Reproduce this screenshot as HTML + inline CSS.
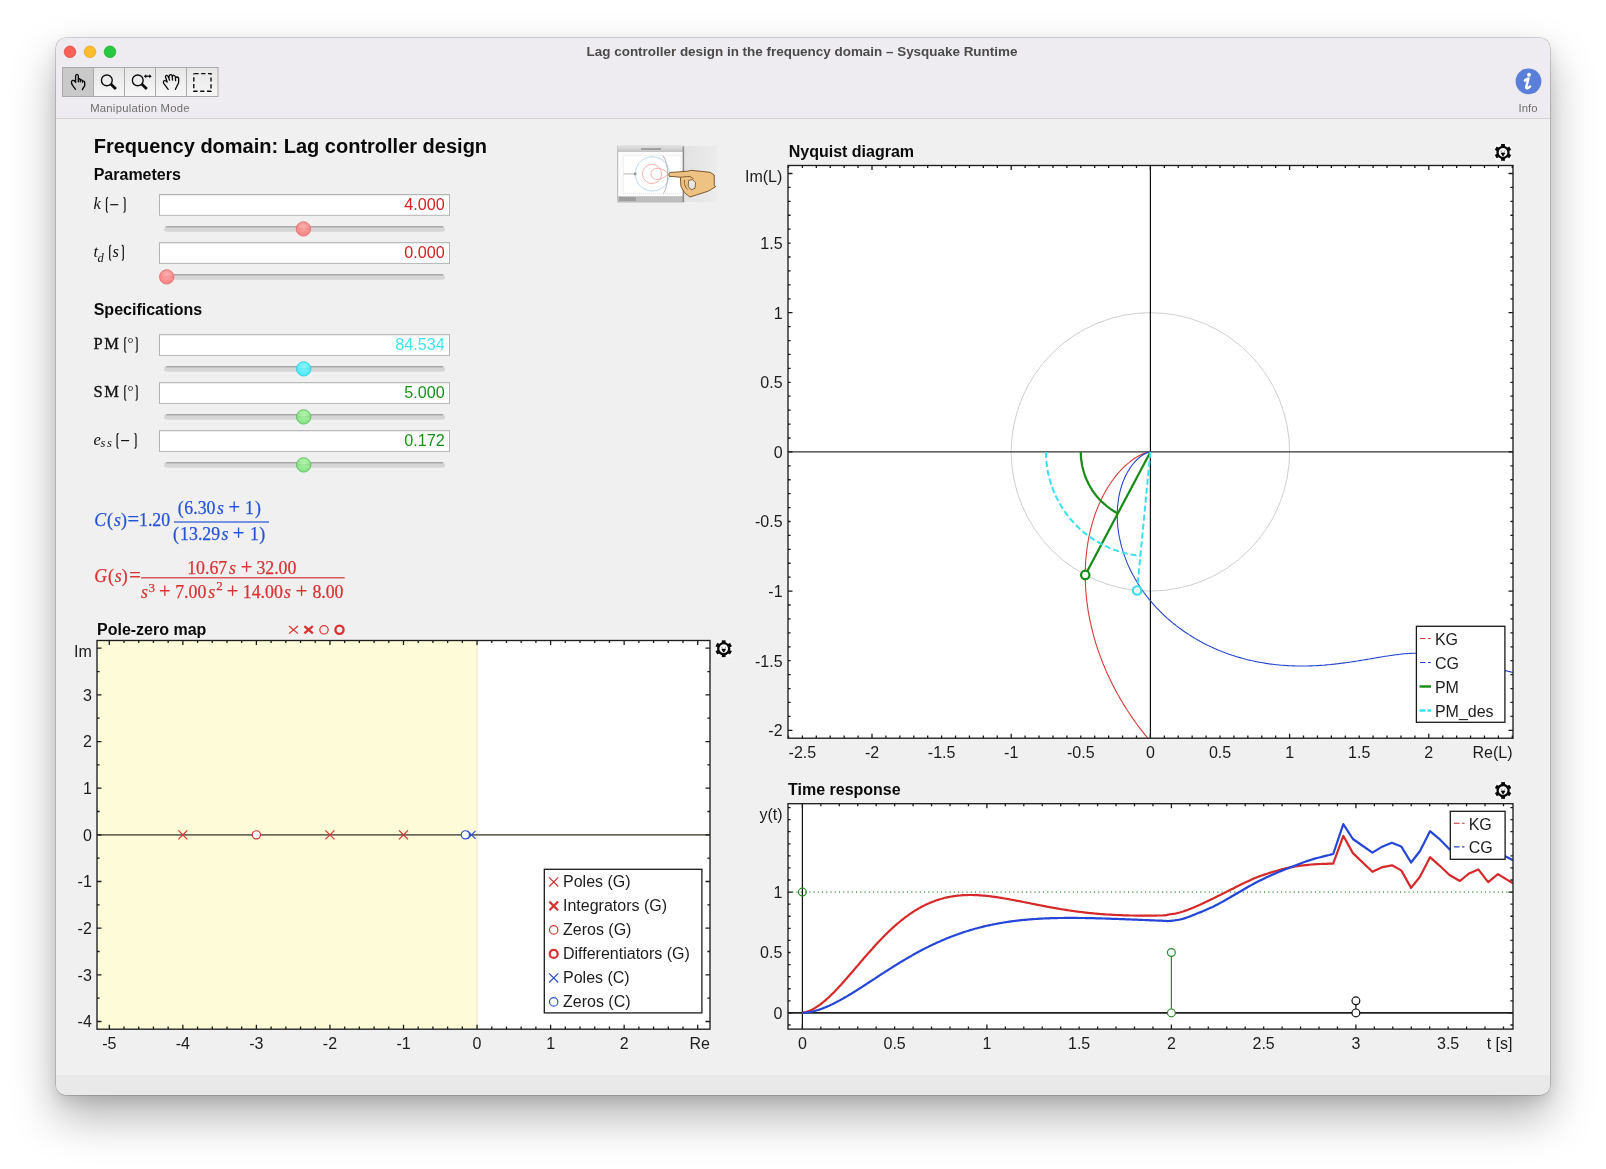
<!DOCTYPE html>
<html><head><meta charset="utf-8"><style>
html,body{margin:0;padding:0;width:1606px;height:1169px;overflow:hidden;background:#ffffff;}
#win{position:absolute;left:56px;top:37.5px;width:1494px;height:1057px;border-radius:10px;background:#f0f0f0;
box-shadow:0 0 0 0.5px rgba(0,0,0,0.3),0 6px 14px rgba(0,0,0,0.10),0 22px 46px rgba(0,0,0,0.30);overflow:hidden}
#tb{position:absolute;left:0;top:0;right:0;height:80px;background:#eeecf0;border-bottom:1px solid #d3d3d5}
#bs{position:absolute;left:0;bottom:0;right:0;height:20px;background:#e9e9e9}
svg{position:absolute;left:0;top:0;will-change:transform}
text{font-family:'Liberation Sans',sans-serif}
</style></head><body>
<div id="win"><div id="tb"></div><div id="bs"></div></div>
<svg width="1606" height="1169" viewBox="0 0 1606 1169">
<text x="802" y="56" font-size="13.45" font-weight="bold" text-anchor="middle" fill="#4a4a4a">Lag controller design in the frequency domain – Sysquake Runtime</text>
<circle cx="70" cy="51.8" r="5.8" fill="#fe5f57" stroke="#e2463f" stroke-width="0.7"/>
<circle cx="90" cy="51.8" r="5.8" fill="#febc2e" stroke="#e1a116" stroke-width="0.7"/>
<circle cx="110" cy="51.8" r="5.8" fill="#28c840" stroke="#14ae2a" stroke-width="0.7"/>
<defs><linearGradient id="btn" x1="0" y1="0" x2="0" y2="1"><stop offset="0" stop-color="#e6e6e6"/><stop offset="1" stop-color="#f7f7f7"/></linearGradient></defs>
<rect x="62.5" y="67.5" width="31.0" height="29" fill="#c9c9c9"/>
<rect x="93.5" y="67.5" width="31.0" height="29" fill="url(#btn)"/>
<rect x="124.5" y="67.5" width="31.0" height="29" fill="url(#btn)"/>
<rect x="155.5" y="67.5" width="31.0" height="29" fill="url(#btn)"/>
<rect x="186.5" y="67.5" width="31.5" height="29" fill="url(#btn)"/>
<rect x="62.5" y="67.5" width="155.5" height="29" fill="none" stroke="#a9a9a9" stroke-width="1"/>
<line x1="93.5" y1="67.5" x2="93.5" y2="96.5" stroke="#a9a9a9" stroke-width="1"/>
<line x1="124.5" y1="67.5" x2="124.5" y2="96.5" stroke="#a9a9a9" stroke-width="1"/>
<line x1="155.5" y1="67.5" x2="155.5" y2="96.5" stroke="#a9a9a9" stroke-width="1"/>
<line x1="186.5" y1="67.5" x2="186.5" y2="96.5" stroke="#a9a9a9" stroke-width="1"/>
<path d="M75.55 89.3 L72.76 85.7 C71.8 84.3 71.2 83 71.5 81.6 C72 80.3 73.3 80.1 74.2 80.6 L75.6 82.2 V76.2 C75.6 74.9 76.2 74.3 77 74.3 C77.8 74.3 78.35 74.9 78.35 76.2 V81.7 V79.4 C78.35 78.5 80.3 78.5 80.3 79.8 V81.7 V80.6 C80.4 79.6 82.4 79.6 82.5 81 V82.3 V81.6 C82.8 80.8 84.7 81 84.7 82.6 V85.7 L82.3 89.7" fill="none" stroke="#0a0a0a" stroke-width="1.35" stroke-linecap="round" stroke-linejoin="round"/>
<circle cx="106.84" cy="80.35" r="5.4" fill="none" stroke="#0a0a0a" stroke-width="1.35"/><path d="M110.8 84.1 L115.9 89" stroke="#0a0a0a" stroke-width="2.8"/>
<circle cx="137.75" cy="80.35" r="5.4" fill="none" stroke="#0a0a0a" stroke-width="1.35"/><path d="M141.7 84.1 L146.8 89" stroke="#0a0a0a" stroke-width="2.8"/><path d="M145.5 76.2 H150" stroke="#0a0a0a" stroke-width="1.3"/><path d="M143.8 76.2 L146.2 74.2 V78.2Z M151.7 76.2 L149.3 74.2 V78.2Z" fill="#0a0a0a"/>
<path d="M168.2 89.3 L163.9 83.7 C163.2 82.6 163.2 81.2 164.3 80.7 C165.2 80.3 166.2 80.9 167.2 82 L165.6 77.2 C165.2 76 166 75.2 166.8 75.3 C167.6 75.4 168.1 76 168.4 77 L169.6 80.2 M169.2 77.2 C169 75.6 169.7 74.7 170.7 74.7 C171.7 74.7 172.2 75.5 172.3 76.6 L172.5 80 M172.3 76.6 C172.5 75.6 173.2 75.2 173.9 75.3 C174.8 75.4 175.3 76.2 175.4 77.2 L175.6 80.6 M175.4 78 C175.7 77.2 176.4 76.9 177.1 77 C178.2 77.2 178.8 78.2 178.7 79.6 L178.5 83 L175.4 89.3" fill="none" stroke="#0a0a0a" stroke-width="1.3" stroke-linecap="round" stroke-linejoin="round"/>
<rect x="193.8" y="73.6" width="17.2" height="17.6" fill="none" stroke="#0a0a0a" stroke-width="1.35" stroke-dasharray="4.2 2.6" stroke-dashoffset="-0.6"/>
<text x="140" y="111.6" font-size="11.3" text-anchor="middle" fill="#6f6f6f" letter-spacing="0.25">Manipulation Mode</text>
<circle cx="1528.5" cy="81.3" r="12.9" fill="#5a7fd8"/>
<path d="M1524.9 80.6 Q1527 78.3 1528.5 78.4 L1526.3 86.5 Q1525.9 88.5 1527.3 88.3 Q1528.7 88 1530 86.5" fill="none" stroke="#fff" stroke-width="2.5" stroke-linecap="round" stroke-linejoin="round"/><circle cx="1529" cy="74.7" r="1.95" fill="#fff"/>
<text x="1528" y="111.8" font-size="11.3" text-anchor="middle" fill="#6f6f6f">Info</text>
<text x="93.7" y="152.8" font-size="20" text-anchor="start" font-weight="bold" fill="#0a0a0a" >Frequency domain: Lag controller design</text>
<text x="93.7" y="179.8" font-size="16" text-anchor="start" font-weight="bold" fill="#0a0a0a" >Parameters</text>
<text x="93.7" y="315.3" font-size="16" text-anchor="start" font-weight="bold" fill="#0a0a0a" >Specifications</text>
<defs><radialGradient id="thf77b7b" cx="0.5" cy="0.35" r="0.7"><stop offset="0" stop-color="#fbb0b0"/><stop offset="1" stop-color="#f77b7b"/></radialGradient></defs>
<defs><radialGradient id="th3de8f6" cx="0.5" cy="0.35" r="0.7"><stop offset="0" stop-color="#8ff5fc"/><stop offset="1" stop-color="#3de8f6"/></radialGradient></defs>
<defs><radialGradient id="th7ee07e" cx="0.5" cy="0.35" r="0.7"><stop offset="0" stop-color="#b8f2b0"/><stop offset="1" stop-color="#7ee07e"/></radialGradient></defs>
<text x="93.4" y="209" font-size="16.5" style="font-family:'Liberation Serif',serif" fill="#111" font-style="italic">k</text>
<path d="M108 197.4 Q106.5 197.7 106.5 199.4 V210.5 Q106.5 212.2 108 212.5 M123.5 197.4 Q125 197.7 125 199.4 V210.5 Q125 212.2 123.5 212.5" fill="none" stroke="#1a1a1a" stroke-width="1.25"/>
<line x1="110.2" y1="204.7" x2="118.3" y2="204.7" stroke="#111" stroke-width="1.2"/>
<text x="93.6" y="256.8" font-size="16.5" style="font-family:'Liberation Serif',serif" fill="#111" font-style="italic">t</text>
<text x="97.6" y="261.9" font-size="12.5" style="font-family:'Liberation Serif',serif" fill="#111" font-style="italic">d</text>
<path d="M111.2 245.2 Q109.7 245.5 109.7 247.2 V258.5 Q109.7 260.2 111.2 260.5 M121.8 245.2 Q123.3 245.5 123.3 247.2 V258.5 Q123.3 260.2 121.8 260.5" fill="none" stroke="#1a1a1a" stroke-width="1.25"/>
<text x="112.6" y="257.2" font-size="16.5" style="font-family:'Liberation Serif',serif" fill="#111" font-style="italic">s</text>
<text x="93.6" y="348.7" font-size="16.5" style="font-family:'Liberation Serif',serif" fill="#111" stroke="#111" stroke-width="0.35" letter-spacing="1.4">PM</text>
<path d="M126.3 337.3 Q124.8 337.6 124.8 339.3 V350.4 Q124.8 352.1 126.3 352.4 M135.6 337.3 Q137.1 337.6 137.1 339.3 V350.4 Q137.1 352.1 135.6 352.4" fill="none" stroke="#1a1a1a" stroke-width="1.25"/>
<text x="130.5" y="348" font-size="15" style="font-family:'Liberation Serif',serif" fill="#111" text-anchor="middle">°</text>
<text x="93.6" y="396.7" font-size="16.5" style="font-family:'Liberation Serif',serif" fill="#111" stroke="#111" stroke-width="0.35" letter-spacing="1.4">SM</text>
<path d="M126.3 385.3 Q124.8 385.6 124.8 387.3 V398.4 Q124.8 400.1 126.3 400.4 M135.6 385.3 Q137.1 385.6 137.1 387.3 V398.4 Q137.1 400.1 135.6 400.4" fill="none" stroke="#1a1a1a" stroke-width="1.25"/>
<text x="130.5" y="396" font-size="15" style="font-family:'Liberation Serif',serif" fill="#111" text-anchor="middle">°</text>
<text x="93.6" y="444.9" font-size="16.5" style="font-family:'Liberation Serif',serif" fill="#111" font-style="italic">e</text>
<text x="100.6" y="446.9" font-size="12.5" style="font-family:'Liberation Serif',serif" fill="#111" font-style="italic" letter-spacing="1.6">ss</text>
<path d="M118.6 433.3 Q117.1 433.6 117.1 435.3 V446.4 Q117.1 448.1 118.6 448.4 M134.5 433.3 Q136 433.6 136 435.3 V446.4 Q136 448.1 134.5 448.4" fill="none" stroke="#1a1a1a" stroke-width="1.25"/>
<line x1="121.1" y1="440.6" x2="129.1" y2="440.6" stroke="#111" stroke-width="1.2"/>
<rect x="159.5" y="194.5" width="290" height="20.8" fill="#fff" stroke="#b4b4b4" stroke-width="1"/>
<line x1="160" y1="195.5" x2="449" y2="195.5" stroke="#ececec" stroke-width="1"/>
<text x="444.8" y="210.1" font-size="16.2" text-anchor="end" fill="#d51f1f">4.000</text>
<rect x="164" y="226.3" width="281" height="5.4" rx="2.7" fill="#d6d6d6"/>
<path d="M166.5 226.8 H442.5" stroke="#a9a9a9" stroke-width="1.4" stroke-linecap="round"/>
<circle cx="303.4" cy="228.9" r="7.2" fill="url(#thf77b7b)" stroke="#e26a6a" stroke-width="0.8"/>
<line x1="296.9" y1="228.9" x2="309.9" y2="228.9" stroke="#e26a6a" stroke-opacity="0.35" stroke-width="0.8"/>
<rect x="159.5" y="242.6" width="290" height="20.8" fill="#fff" stroke="#b4b4b4" stroke-width="1"/>
<line x1="160" y1="243.6" x2="449" y2="243.6" stroke="#ececec" stroke-width="1"/>
<text x="444.8" y="258.2" font-size="16.2" text-anchor="end" fill="#d51f1f">0.000</text>
<rect x="164" y="274.29999999999995" width="281" height="5.4" rx="2.7" fill="#d6d6d6"/>
<path d="M166.5 274.79999999999995 H442.5" stroke="#a9a9a9" stroke-width="1.4" stroke-linecap="round"/>
<circle cx="166.7" cy="276.9" r="7.2" fill="url(#thf77b7b)" stroke="#e26a6a" stroke-width="0.8"/>
<line x1="160.2" y1="276.9" x2="173.2" y2="276.9" stroke="#e26a6a" stroke-opacity="0.35" stroke-width="0.8"/>
<rect x="159.5" y="334.6" width="290" height="20.8" fill="#fff" stroke="#b4b4b4" stroke-width="1"/>
<line x1="160" y1="335.6" x2="449" y2="335.6" stroke="#ececec" stroke-width="1"/>
<text x="444.8" y="350.20000000000005" font-size="16.2" text-anchor="end" fill="#3ee4f2">84.534</text>
<rect x="164" y="366.29999999999995" width="281" height="5.4" rx="2.7" fill="#d6d6d6"/>
<path d="M166.5 366.79999999999995 H442.5" stroke="#a9a9a9" stroke-width="1.4" stroke-linecap="round"/>
<circle cx="303.7" cy="368.9" r="7.2" fill="url(#th3de8f6)" stroke="#28c6d6" stroke-width="0.8"/>
<line x1="297.2" y1="368.9" x2="310.2" y2="368.9" stroke="#28c6d6" stroke-opacity="0.35" stroke-width="0.8"/>
<rect x="159.5" y="382.6" width="290" height="20.8" fill="#fff" stroke="#b4b4b4" stroke-width="1"/>
<line x1="160" y1="383.6" x2="449" y2="383.6" stroke="#ececec" stroke-width="1"/>
<text x="444.8" y="398.20000000000005" font-size="16.2" text-anchor="end" fill="#199119">5.000</text>
<rect x="164" y="414.29999999999995" width="281" height="5.4" rx="2.7" fill="#d6d6d6"/>
<path d="M166.5 414.79999999999995 H442.5" stroke="#a9a9a9" stroke-width="1.4" stroke-linecap="round"/>
<circle cx="303.7" cy="416.9" r="7.2" fill="url(#th7ee07e)" stroke="#53b653" stroke-width="0.8"/>
<line x1="297.2" y1="416.9" x2="310.2" y2="416.9" stroke="#53b653" stroke-opacity="0.35" stroke-width="0.8"/>
<rect x="159.5" y="430.6" width="290" height="20.8" fill="#fff" stroke="#b4b4b4" stroke-width="1"/>
<line x1="160" y1="431.6" x2="449" y2="431.6" stroke="#ececec" stroke-width="1"/>
<text x="444.8" y="446.20000000000005" font-size="16.2" text-anchor="end" fill="#199119">0.172</text>
<rect x="164" y="462.29999999999995" width="281" height="5.4" rx="2.7" fill="#d6d6d6"/>
<path d="M166.5 462.79999999999995 H442.5" stroke="#a9a9a9" stroke-width="1.4" stroke-linecap="round"/>
<circle cx="303.7" cy="464.9" r="7.2" fill="url(#th7ee07e)" stroke="#53b653" stroke-width="0.8"/>
<line x1="297.2" y1="464.9" x2="310.2" y2="464.9" stroke="#53b653" stroke-opacity="0.35" stroke-width="0.8"/>
<text x="94.3" y="525.8" font-size="17.8" style="font-family:'Liberation Serif',serif" fill="#2553d6" stroke="#2553d6" stroke-width="0.25" font-style="italic">C</text>
<text x="107" y="525.8" font-size="17.8" style="font-family:'Liberation Serif',serif" fill="#2553d6" stroke="#2553d6" stroke-width="0.25">(</text>
<text x="114.1" y="525.8" font-size="17.8" style="font-family:'Liberation Serif',serif" fill="#2553d6" stroke="#2553d6" stroke-width="0.25" font-style="italic">s</text>
<text x="121" y="525.8" font-size="17.8" style="font-family:'Liberation Serif',serif" fill="#2553d6" stroke="#2553d6" stroke-width="0.25">)</text>
<text x="127.4" y="525.8" font-size="20.5" style="font-family:'Liberation Serif',serif" fill="#2553d6" stroke="#2553d6" stroke-width="0.25">=</text>
<text x="139" y="525.8" font-size="17.8" style="font-family:'Liberation Serif',serif" fill="#2553d6" stroke="#2553d6" stroke-width="0.25">1.20</text>
<line x1="174" y1="522" x2="269" y2="522" stroke="#2553d6" stroke-width="1.6" stroke-opacity="0.8"/>
<text x="177.7" y="513.8" font-size="17.8" style="font-family:'Liberation Serif',serif" fill="#2553d6" stroke="#2553d6" stroke-width="0.25">(</text>
<text x="184.3" y="513.8" font-size="17.8" style="font-family:'Liberation Serif',serif" fill="#2553d6" stroke="#2553d6" stroke-width="0.25">6.30</text>
<text x="217" y="513.8" font-size="17.8" style="font-family:'Liberation Serif',serif" fill="#2553d6" stroke="#2553d6" stroke-width="0.25" font-style="italic">s</text>
<text x="228.5" y="513.8" font-size="20.5" style="font-family:'Liberation Serif',serif" fill="#2553d6" stroke="#2553d6" stroke-width="0.25">+</text>
<text x="244.9" y="513.8" font-size="17.8" style="font-family:'Liberation Serif',serif" fill="#2553d6" stroke="#2553d6" stroke-width="0.25">1</text>
<text x="254.9" y="513.8" font-size="17.8" style="font-family:'Liberation Serif',serif" fill="#2553d6" stroke="#2553d6" stroke-width="0.25">)</text>
<text x="173" y="540" font-size="17.8" style="font-family:'Liberation Serif',serif" fill="#2553d6" stroke="#2553d6" stroke-width="0.25">(</text>
<text x="180.1" y="540" font-size="17.8" style="font-family:'Liberation Serif',serif" fill="#2553d6" stroke="#2553d6" stroke-width="0.25">13.29</text>
<text x="221.4" y="540" font-size="17.8" style="font-family:'Liberation Serif',serif" fill="#2553d6" stroke="#2553d6" stroke-width="0.25" font-style="italic">s</text>
<text x="232.8" y="540" font-size="20.5" style="font-family:'Liberation Serif',serif" fill="#2553d6" stroke="#2553d6" stroke-width="0.25">+</text>
<text x="249.9" y="540" font-size="17.8" style="font-family:'Liberation Serif',serif" fill="#2553d6" stroke="#2553d6" stroke-width="0.25">1</text>
<text x="259.3" y="540" font-size="17.8" style="font-family:'Liberation Serif',serif" fill="#2553d6" stroke="#2553d6" stroke-width="0.25">)</text>
<text x="94.3" y="581.7" font-size="17.8" style="font-family:'Liberation Serif',serif" fill="#d93333" stroke="#d93333" stroke-width="0.25" font-style="italic">G</text>
<text x="108" y="581.7" font-size="17.8" style="font-family:'Liberation Serif',serif" fill="#d93333" stroke="#d93333" stroke-width="0.25">(</text>
<text x="114.7" y="581.7" font-size="17.8" style="font-family:'Liberation Serif',serif" fill="#d93333" stroke="#d93333" stroke-width="0.25" font-style="italic">s</text>
<text x="121.8" y="581.7" font-size="17.8" style="font-family:'Liberation Serif',serif" fill="#d93333" stroke="#d93333" stroke-width="0.25">)</text>
<text x="129.2" y="581.7" font-size="20.5" style="font-family:'Liberation Serif',serif" fill="#d93333" stroke="#d93333" stroke-width="0.25">=</text>
<line x1="141" y1="577.7" x2="344.7" y2="577.7" stroke="#d93333" stroke-width="1.6" stroke-opacity="0.8"/>
<text x="187.2" y="574.4" font-size="17.8" style="font-family:'Liberation Serif',serif" fill="#d93333" stroke="#d93333" stroke-width="0.25">10.67</text>
<text x="228.9" y="574.4" font-size="17.8" style="font-family:'Liberation Serif',serif" fill="#d93333" stroke="#d93333" stroke-width="0.25" font-style="italic">s</text>
<text x="240.7" y="574.4" font-size="20.5" style="font-family:'Liberation Serif',serif" fill="#d93333" stroke="#d93333" stroke-width="0.25">+</text>
<text x="256.4" y="574.4" font-size="17.8" style="font-family:'Liberation Serif',serif" fill="#d93333" stroke="#d93333" stroke-width="0.25">32.00</text>
<text x="141" y="597.5" font-size="17.8" style="font-family:'Liberation Serif',serif" fill="#d93333" stroke="#d93333" stroke-width="0.25" font-style="italic">s</text>
<text x="159.1" y="597.5" font-size="20.5" style="font-family:'Liberation Serif',serif" fill="#d93333" stroke="#d93333" stroke-width="0.25">+</text>
<text x="175.2" y="597.5" font-size="17.8" style="font-family:'Liberation Serif',serif" fill="#d93333" stroke="#d93333" stroke-width="0.25">7.00</text>
<text x="208.2" y="597.5" font-size="17.8" style="font-family:'Liberation Serif',serif" fill="#d93333" stroke="#d93333" stroke-width="0.25" font-style="italic">s</text>
<text x="226.7" y="597.5" font-size="20.5" style="font-family:'Liberation Serif',serif" fill="#d93333" stroke="#d93333" stroke-width="0.25">+</text>
<text x="242.8" y="597.5" font-size="17.8" style="font-family:'Liberation Serif',serif" fill="#d93333" stroke="#d93333" stroke-width="0.25">14.00</text>
<text x="284" y="597.5" font-size="17.8" style="font-family:'Liberation Serif',serif" fill="#d93333" stroke="#d93333" stroke-width="0.25" font-style="italic">s</text>
<text x="295.8" y="597.5" font-size="20.5" style="font-family:'Liberation Serif',serif" fill="#d93333" stroke="#d93333" stroke-width="0.25">+</text>
<text x="312.4" y="597.5" font-size="17.8" style="font-family:'Liberation Serif',serif" fill="#d93333" stroke="#d93333" stroke-width="0.25">8.00</text>
<text x="148.5" y="591.8" font-size="13" style="font-family:'Liberation Serif',serif" fill="#d93333" stroke="#d93333" stroke-width="0.25">3</text>
<text x="216.2" y="590.4" font-size="13" style="font-family:'Liberation Serif',serif" fill="#d93333" stroke="#d93333" stroke-width="0.25">2</text>
<defs><linearGradient id="thbg" x1="0" y1="0" x2="1" y2="0"><stop offset="0" stop-color="#e2e2e2"/><stop offset="1" stop-color="#ececec"/></linearGradient><linearGradient id="thtb" x1="0" y1="0" x2="0" y2="1"><stop offset="0" stop-color="#e2e2e2"/><stop offset="1" stop-color="#c2c2c2"/></linearGradient></defs>
<rect x="683" y="146" width="34" height="56" fill="url(#thbg)"/>
<rect x="617.8" y="146.2" width="66" height="55.8" fill="#fbfbfb" stroke="#9a9a9a" stroke-width="0.7"/>
<rect x="617.8" y="146.2" width="66" height="5.8" fill="url(#thtb)"/>
<rect x="641" y="148" width="20" height="2" fill="#555" opacity="0.4"/>
<rect x="617.8" y="196.2" width="66" height="5.8" fill="#bdbdbd"/><rect x="619" y="197" width="17" height="4" fill="#8a8a8a" opacity="0.6"/>
<line x1="683.2" y1="146.5" x2="683.2" y2="202" stroke="#707070" stroke-width="1"/>
<rect x="623.6" y="155.4" width="57.2" height="38" fill="#fff" stroke="#c8c8c8" stroke-width="0.6" stroke-dasharray="0.8 1.2"/>
<line x1="623.6" y1="173.9" x2="635.3" y2="173.9" stroke="#aaa" stroke-width="0.9"/><rect x="634" y="172.6" width="2.4" height="2.6" fill="#888"/>
<circle cx="652.4" cy="173.9" r="17.1" fill="none" stroke="#9cc8ee" stroke-width="0.7"/>
<circle cx="652" cy="173.9" r="9.6" fill="none" stroke="#f09a9a" stroke-width="0.8"/>
<path d="M668.8 173.9 C664 170 661 168.4 657 168.4 C653.6 168.4 651 170.8 651 173.9 C651 177 653.6 179.4 657 179.4 C661 179.4 664 177.8 668.8 173.9Z" fill="none" stroke="#f09a9a" stroke-width="0.8"/>
<path d="M663 155.4 C669 164 669.5 184 663.5 193.4" fill="none" stroke="#9a9a9a" stroke-width="0.7"/>
<path d="M669.3 176.3 L680.4 177.2 L680.9 186.1 L684.3 192.5 L689.9 197 L704.1 192.5 L708.6 191 L715.7 186.6 L714.3 185.8 L714.2 175 L710 172.3 L691 170.3 L688 171.2 L670.1 172.5 C668.6 173.2 668.6 175.6 669.3 176.3Z" fill="#eec283" stroke="#6e4c1c" stroke-width="0.9" stroke-linejoin="round"/>
<path d="M688.6 180.4 L692.4 179.6 L695.6 182.4 L695 188.3 L691.2 189.8 L688.2 186.2Z" fill="#e6e6e6" stroke="#6e4c1c" stroke-width="0.8"/>
<path d="M684.8 179.8 C683.6 183 685 187 687.8 189.6 M680.4 177.2 L689.9 176.4 L693.6 178.8" fill="none" stroke="#6e4c1c" stroke-width="0.8"/>
<text x="97" y="634.7" font-size="16" text-anchor="start" font-weight="bold" fill="#0a0a0a" >Pole-zero map</text>
<rect x="97" y="640.5" width="613" height="388.70000000000005" fill="#fff"/>
<rect x="97" y="640.5" width="380.05" height="388.70000000000005" fill="#fefbd8"/>
<line x1="477.05" y1="640.5" x2="477.05" y2="1029.2" stroke="#e8e6cf" stroke-width="1"/>
<line x1="97" y1="834.85" x2="710" y2="834.85" stroke="#6c6a5c" stroke-width="1.7"/>
<path d="M109.3 640.5v4.5M109.3 1029.2v-4.5M124.01 640.5v2.6M124.01 1029.2v-2.6M138.72 640.5v2.6M138.72 1029.2v-2.6M153.43 640.5v2.6M153.43 1029.2v-2.6M168.14 640.5v2.6M168.14 1029.2v-2.6M182.85 640.5v4.5M182.85 1029.2v-4.5M197.56 640.5v2.6M197.56 1029.2v-2.6M212.27 640.5v2.6M212.27 1029.2v-2.6M226.98 640.5v2.6M226.98 1029.2v-2.6M241.69 640.5v2.6M241.69 1029.2v-2.6M256.4 640.5v4.5M256.4 1029.2v-4.5M271.11 640.5v2.6M271.11 1029.2v-2.6M285.82 640.5v2.6M285.82 1029.2v-2.6M300.53 640.5v2.6M300.53 1029.2v-2.6M315.24 640.5v2.6M315.24 1029.2v-2.6M329.95 640.5v4.5M329.95 1029.2v-4.5M344.66 640.5v2.6M344.66 1029.2v-2.6M359.37 640.5v2.6M359.37 1029.2v-2.6M374.08 640.5v2.6M374.08 1029.2v-2.6M388.79 640.5v2.6M388.79 1029.2v-2.6M403.5 640.5v4.5M403.5 1029.2v-4.5M418.21 640.5v2.6M418.21 1029.2v-2.6M432.92 640.5v2.6M432.92 1029.2v-2.6M447.63 640.5v2.6M447.63 1029.2v-2.6M462.34 640.5v2.6M462.34 1029.2v-2.6M477.05 640.5v4.5M477.05 1029.2v-4.5M491.76 640.5v2.6M491.76 1029.2v-2.6M506.47 640.5v2.6M506.47 1029.2v-2.6M521.18 640.5v2.6M521.18 1029.2v-2.6M535.89 640.5v2.6M535.89 1029.2v-2.6M550.6 640.5v4.5M550.6 1029.2v-4.5M565.31 640.5v2.6M565.31 1029.2v-2.6M580.02 640.5v2.6M580.02 1029.2v-2.6M594.73 640.5v2.6M594.73 1029.2v-2.6M609.44 640.5v2.6M609.44 1029.2v-2.6M624.15 640.5v4.5M624.15 1029.2v-4.5M638.86 640.5v2.6M638.86 1029.2v-2.6M653.57 640.5v2.6M653.57 1029.2v-2.6M668.28 640.5v2.6M668.28 1029.2v-2.6M682.99 640.5v2.6M682.99 1029.2v-2.6M697.7 640.5v4.5M697.7 1029.2v-4.5M97 1021.49h4.5M710 1021.49h-4.5M97 998.16h2.6M710 998.16h-2.6M97 974.83h4.5M710 974.83h-4.5M97 951.5h2.6M710 951.5h-2.6M97 928.17h4.5M710 928.17h-4.5M97 904.84h2.6M710 904.84h-2.6M97 881.51h4.5M710 881.51h-4.5M97 858.18h2.6M710 858.18h-2.6M97 834.85h4.5M710 834.85h-4.5M97 811.52h2.6M710 811.52h-2.6M97 788.19h4.5M710 788.19h-4.5M97 764.86h2.6M710 764.86h-2.6M97 741.53h4.5M710 741.53h-4.5M97 718.2h2.6M710 718.2h-2.6M97 694.87h4.5M710 694.87h-4.5M97 671.54h2.6M710 671.54h-2.6M97 648.21h4.5M710 648.21h-4.5" stroke="#1a1a1a" stroke-width="1.3" fill="none"/>
<rect x="97" y="640.5" width="613" height="388.7" fill="none" stroke="#1e1e1e" stroke-width="1.35"/>
<text x="109.3" y="1048.8" font-size="16" text-anchor="middle" fill="#1c1c1c" >-5</text>
<text x="182.85" y="1048.8" font-size="16" text-anchor="middle" fill="#1c1c1c" >-4</text>
<text x="256.4" y="1048.8" font-size="16" text-anchor="middle" fill="#1c1c1c" >-3</text>
<text x="329.95" y="1048.8" font-size="16" text-anchor="middle" fill="#1c1c1c" >-2</text>
<text x="403.5" y="1048.8" font-size="16" text-anchor="middle" fill="#1c1c1c" >-1</text>
<text x="477.05" y="1048.8" font-size="16" text-anchor="middle" fill="#1c1c1c" >0</text>
<text x="550.6" y="1048.8" font-size="16" text-anchor="middle" fill="#1c1c1c" >1</text>
<text x="624.15" y="1048.8" font-size="16" text-anchor="middle" fill="#1c1c1c" >2</text>
<text x="710" y="1048.8" font-size="16" text-anchor="end" fill="#1c1c1c" >Re</text>
<text x="91.8" y="1027.29" font-size="16" text-anchor="end" fill="#1c1c1c" >-4</text>
<text x="91.8" y="980.63" font-size="16" text-anchor="end" fill="#1c1c1c" >-3</text>
<text x="91.8" y="933.97" font-size="16" text-anchor="end" fill="#1c1c1c" >-2</text>
<text x="91.8" y="887.31" font-size="16" text-anchor="end" fill="#1c1c1c" >-1</text>
<text x="91.8" y="840.65" font-size="16" text-anchor="end" fill="#1c1c1c" >0</text>
<text x="91.8" y="793.99" font-size="16" text-anchor="end" fill="#1c1c1c" >1</text>
<text x="91.8" y="747.33" font-size="16" text-anchor="end" fill="#1c1c1c" >2</text>
<text x="91.8" y="700.67" font-size="16" text-anchor="end" fill="#1c1c1c" >3</text>
<text x="91.8" y="656.9" font-size="16" text-anchor="end" fill="#1c1c1c" >Im</text>
<rect x="715.2" y="640.2" width="17" height="17" rx="3" fill="#fff" opacity="0.6"/>
<rect x="721.8" y="640.3" width="3.8" height="3.6" fill="#0a0a0a" transform="rotate(0 723.7 648.7)"/>
<rect x="721.8" y="640.3" width="3.8" height="3.6" fill="#0a0a0a" transform="rotate(60 723.7 648.7)"/>
<rect x="721.8" y="640.3" width="3.8" height="3.6" fill="#0a0a0a" transform="rotate(120 723.7 648.7)"/>
<rect x="721.8" y="640.3" width="3.8" height="3.6" fill="#0a0a0a" transform="rotate(180 723.7 648.7)"/>
<rect x="721.8" y="640.3" width="3.8" height="3.6" fill="#0a0a0a" transform="rotate(240 723.7 648.7)"/>
<rect x="721.8" y="640.3" width="3.8" height="3.6" fill="#0a0a0a" transform="rotate(300 723.7 648.7)"/>
<circle cx="723.7" cy="648.7" r="5.5" fill="none" stroke="#0a0a0a" stroke-width="2.3"/>
<path d="M721.4 649.3 Q723.7 648.3 726 649.3 L724.2 652.3 H723.2 Z" fill="#0a0a0a"/>
<path d="M721.7 646.9 L722.5 649 M725.7 646.9 L724.9 649" stroke="#888" stroke-width="0.8"/>
<path d="M178.35 830.35L187.35 839.35M178.35 839.35L187.35 830.35" stroke="#d93030" stroke-width="1.2" fill="none"/>
<path d="M325.45 830.35L334.45 839.35M325.45 839.35L334.45 830.35" stroke="#d93030" stroke-width="1.2" fill="none"/>
<path d="M399 830.35L408 839.35M399 839.35L408 830.35" stroke="#d93030" stroke-width="1.2" fill="none"/>
<circle cx="256.4" cy="834.85" r="4.1" fill="#fff" stroke="#d93030" stroke-width="1.2"/>
<circle cx="465.38" cy="834.85" r="4.1" fill="#fff" stroke="#2a4fd0" stroke-width="1.2"/>
<path d="M467.52 830.85L475.52 838.85M467.52 838.85L475.52 830.85" stroke="#2a4fd0" stroke-width="1.2" fill="none"/>
<path d="M289 626L298 633.6M289 633.6L298 626" stroke="#d93030" stroke-width="1.2"/>
<path d="M304.4 626.2L312.8 633.4M304.4 633.4L312.8 626.2" stroke="#d93030" stroke-width="2.2"/>
<circle cx="324" cy="629.8" r="4.2" fill="none" stroke="#d93030" stroke-width="1.2"/>
<circle cx="339.5" cy="629.8" r="4.1" fill="none" stroke="#d93030" stroke-width="2.3"/>
<rect x="544.3" y="869.3" width="157.6" height="143.6" fill="#fff" stroke="#1a1a1a" stroke-width="1.3"/>
<text x="563" y="887.4" font-size="16" text-anchor="start" fill="#1c1c1c" >Poles (G)</text>
<path d="M549.1 877.3L558.3 886.5M549.1 886.5L558.3 877.3" stroke="#d93030" stroke-width="1.2" fill="none"/>
<text x="563" y="911.4" font-size="16" text-anchor="start" fill="#1c1c1c" >Integrators (G)</text>
<path d="M549.4 901.6L558 910.2M549.4 910.2L558 901.6" stroke="#d93030" stroke-width="2.2" fill="none"/>
<text x="563" y="935.4" font-size="16" text-anchor="start" fill="#1c1c1c" >Zeros (G)</text>
<circle cx="553.7" cy="929.9" r="4.2" fill="none" stroke="#d93030" stroke-width="1.2"/>
<text x="563" y="959.4" font-size="16" text-anchor="start" fill="#1c1c1c" >Differentiators (G)</text>
<circle cx="553.7" cy="953.9" r="4" fill="none" stroke="#d93030" stroke-width="2.2"/>
<text x="563" y="983.4" font-size="16" text-anchor="start" fill="#1c1c1c" >Poles (C)</text>
<path d="M549.1 973.3L558.3 982.5M549.1 982.5L558.3 973.3" stroke="#2a4fd0" stroke-width="1.2" fill="none"/>
<text x="563" y="1007.4" font-size="16" text-anchor="start" fill="#1c1c1c" >Zeros (C)</text>
<circle cx="553.7" cy="1001.9" r="4.2" fill="none" stroke="#2a4fd0" stroke-width="1.2"/>
<text x="788.7" y="156.9" font-size="16" text-anchor="start" font-weight="bold" fill="#0a0a0a" >Nyquist diagram</text>
<rect x="788" y="165.5" width="725" height="572.7" fill="#fff"/>
<defs><clipPath id="nclip"><rect x="788" y="165.5" width="725" height="572.7"/></clipPath><clipPath id="tclip"><rect x="788" y="803.7" width="725" height="225.4"/></clipPath></defs>
<circle cx="1150.4" cy="451.9" r="139.2" fill="none" stroke="#cfcfcf" stroke-width="1"/>
<line x1="788" y1="451.9" x2="1513" y2="451.9" stroke="#333" stroke-width="1.4"/>
<line x1="1150.4" y1="165.5" x2="1150.4" y2="738.2" stroke="#111" stroke-width="1.2"/>
<g clip-path="url(#nclip)"><path d="M1179.5 771.1 L1176.9 768.8 L1174.4 766.4 L1171.9 764.1 L1169.4 761.7 L1167.0 759.3 L1164.6 756.9 L1162.3 754.5 L1160.0 752.0 L1157.7 749.6 L1155.5 747.1 L1153.3 744.7 L1151.2 742.2 L1149.0 739.7 L1147.0 737.2 L1144.9 734.7 L1142.9 732.1 L1141.0 729.6 L1139.0 727.1 L1137.1 724.5 L1135.3 722.0 L1133.5 719.4 L1131.7 716.9 L1130.0 714.3 L1128.3 711.8 L1126.6 709.2 L1125.0 706.6 L1123.4 704.1 L1121.9 701.5 L1120.3 698.9 L1118.9 696.3 L1117.4 693.8 L1116.0 691.2 L1114.7 688.7 L1113.3 686.1 L1112.0 683.5 L1110.8 681.0 L1109.6 678.5 L1108.4 675.9 L1107.2 673.4 L1106.1 670.9 L1105.0 668.3 L1104.0 665.8 L1102.9 663.3 L1102.0 660.8 L1101.0 658.3 L1100.1 655.9 L1099.2 653.4 L1098.3 650.9 L1097.5 648.5 L1096.7 646.1 L1095.9 643.6 L1095.2 641.2 L1094.5 638.8 L1093.8 636.4 L1093.2 634.1 L1092.6 631.7 L1092.0 629.4 L1091.4 627.0 L1090.9 624.7 L1090.4 622.4 L1089.9 620.1 L1089.5 617.9 L1089.0 615.6 L1088.6 613.4 L1088.2 611.1 L1087.9 608.9 L1087.6 606.7 L1087.3 604.6 L1087.0 602.4 L1086.7 600.3 L1086.5 598.2 L1086.3 596.1 L1086.1 594.0 L1085.9 591.9 L1085.8 589.9 L1085.6 587.8 L1085.5 585.8 L1085.4 583.8 L1085.4 581.8 L1085.3 579.9 L1085.3 577.9 L1085.3 576.0 L1085.3 574.1 L1085.3 572.2 L1085.3 570.4 L1085.4 568.5 L1085.4 566.7 L1085.5 564.9 L1085.6 563.1 L1085.7 561.4 L1085.8 559.6 L1086.0 557.9 L1086.1 556.2 L1086.3 554.5 L1086.5 552.8 L1086.7 551.2 L1086.9 549.6 L1087.1 547.9 L1087.3 546.3 L1087.6 544.8 L1087.8 543.2 L1088.1 541.7 L1088.3 540.2 L1088.6 538.7 L1088.9 537.2 L1089.2 535.7 L1089.5 534.3 L1089.8 532.9 L1090.1 531.5 L1090.5 530.1 L1090.8 528.7 L1091.2 527.4 L1091.5 526.1 L1091.9 524.8 L1092.2 523.5 L1092.6 522.2 L1093.0 520.9 L1093.4 519.7 L1093.7 518.5 L1094.1 517.3 L1094.5 516.1 L1094.9 514.9 L1095.3 513.8 L1095.7 512.6 L1096.1 511.5 L1096.6 510.4 L1097.0 509.3 L1097.4 508.3 L1097.8 507.2 L1098.3 506.2 L1098.7 505.2 L1099.1 504.2 L1099.6 503.2 L1100.0 502.2 L1100.4 501.2 L1100.9 500.3 L1101.3 499.4 L1101.8 498.5 L1102.2 497.6 L1102.6 496.7 L1103.1 495.8 L1103.5 494.9 L1104.0 494.1 L1104.4 493.3 L1104.9 492.5 L1105.3 491.7 L1105.8 490.9 L1106.2 490.1 L1106.7 489.3 L1107.1 488.6 L1107.5 487.9 L1108.0 487.1 L1108.4 486.4 L1108.9 485.7 L1109.3 485.1 L1109.7 484.4 L1110.2 483.7 L1110.6 483.1 L1111.1 482.4 L1111.5 481.8 L1111.9 481.2 L1112.3 480.6 L1112.8 480.0 L1113.2 479.4 L1113.6 478.9 L1114.0 478.3 L1114.5 477.7 L1114.9 477.2 L1115.3 476.7 L1115.7 476.2 L1116.1 475.6 L1116.5 475.1 L1116.9 474.6 L1117.3 474.2 L1117.7 473.7 L1118.1 473.2 L1118.5 472.8 L1118.9 472.3 L1119.3 471.9 L1119.7 471.5 L1120.1 471.0 L1120.4 470.6 L1120.8 470.2 L1121.2 469.8 L1121.6 469.4 L1121.9 469.1 L1122.3 468.7 L1122.7 468.3 L1123.0 468.0 L1123.4 467.6 L1123.7 467.3 L1124.1 466.9 L1124.4 466.6 L1124.8 466.3 L1125.1 466.0 L1125.4 465.6 L1125.8 465.3 L1126.1 465.0 L1126.4 464.7 L1126.7 464.5 L1127.1 464.2 L1127.4 463.9 L1127.7 463.6 L1128.0 463.4 L1128.3 463.1 L1128.6 462.9 L1128.9 462.6 L1129.2 462.4 L1129.5 462.1 L1129.8 461.9 L1130.1 461.7 L1130.4 461.5 L1130.6 461.2 L1130.9 461.0 L1131.2 460.8 L1131.5 460.6 L1131.7 460.4 L1132.0 460.2 L1132.3 460.0 L1132.5 459.8 L1132.8 459.7 L1133.0 459.5 L1133.3 459.3 L1133.5 459.1 L1133.8 459.0 L1134.0 458.8 L1134.3 458.6 L1134.5 458.5 L1134.7 458.3 L1135.0 458.2 L1135.2 458.0 L1135.4 457.9 L1135.6 457.8 L1135.8 457.6 L1136.1 457.5 L1136.3 457.4 L1136.5 457.2 L1136.7 457.1 L1136.9 457.0 L1137.1 456.9 L1137.3 456.7 L1137.5 456.6 L1137.7 456.5 L1137.9 456.4 L1138.1 456.3 L1138.3 456.2 L1138.4 456.1 L1138.6 456.0 L1138.8 455.9 L1139.0 455.8 L1139.1 455.7 L1139.3 455.6 L1139.5 455.5 L1139.7 455.5 L1139.8 455.4 L1140.0 455.3 L1140.1 455.2 L1140.3 455.1 L1140.5 455.0 L1140.6 455.0 L1140.8 454.9 L1140.9 454.8 L1141.1 454.8 L1141.2 454.7 L1141.3 454.6 L1141.5 454.6 L1141.6 454.5 L1141.8 454.4 L1141.9 454.4 L1142.0 454.3 L1142.2 454.3 L1142.3 454.2 L1142.4 454.1 L1142.5 454.1 L1142.7 454.0 L1142.8 454.0 L1142.9 453.9 L1143.0 453.9 L1143.1 453.8 L1143.3 453.8 L1143.4 453.7 L1143.5 453.7 L1143.6 453.7 L1143.7 453.6 L1143.8 453.6 L1143.9 453.5 L1144.0 453.5 L1144.1 453.5 L1144.2 453.4 L1144.3 453.4 L1144.4 453.3 L1144.5 453.3 L1144.6 453.3 L1144.7 453.2 L1144.8 453.2 L1144.9 453.2 L1145.0 453.1 L1145.0 453.1 L1145.1 453.1 L1145.2 453.1 L1145.3 453.0 L1145.4 453.0 L1145.5 453.0 L1145.5 452.9 L1145.6 452.9 L1145.7 452.9 L1145.8 452.9 L1145.9 452.8 L1145.9 452.8 L1146.0 452.8 L1146.1 452.8 L1146.1 452.8 L1146.2 452.7 L1146.3 452.7 L1146.3 452.7 L1146.4 452.7 L1146.5 452.7 L1146.5 452.6 L1146.6 452.6 L1146.7 452.6 L1146.7 452.6 L1146.8 452.6 L1146.8 452.6 L1146.9 452.5 L1147.0 452.5 L1147.0 452.5 L1147.1 452.5 L1147.1 452.5 L1147.2 452.5 L1147.2 452.4 L1147.3 452.4 L1147.3 452.4 L1147.4 452.4 L1147.4 452.4 L1147.5 452.4 L1147.5 452.4 L1147.6 452.4 L1147.6 452.3 L1147.7 452.3 L1147.7 452.3 L1147.8 452.3 L1147.8 452.3 L1147.8 452.3 L1147.9 452.3 L1147.9 452.3 L1148.0 452.3 L1148.0 452.3 L1148.0 452.2 L1148.1 452.2 L1148.1 452.2 L1148.2 452.2 L1148.2 452.2 L1148.2 452.2 L1148.3 452.2 L1148.3 452.2 L1148.3 452.2 L1148.4 452.2 L1148.4 452.2 L1148.4 452.2 L1148.5 452.2 L1148.5 452.2 L1148.5 452.1 L1148.6 452.1 L1148.6 452.1 L1148.6 452.1 L1148.7 452.1 L1148.7 452.1 L1148.7 452.1 L1148.7 452.1 L1148.8 452.1 L1148.8 452.1 L1148.8 452.1 L1148.8 452.1 L1148.9 452.1 L1148.9 452.1 L1148.9 452.1 L1148.9 452.1 L1149.0 452.1 L1149.0 452.1 L1149.0 452.1 L1149.0 452.1 L1149.1 452.0 L1149.1 452.0 L1149.1 452.0 L1149.1 452.0 L1149.1 452.0 L1149.2 452.0 L1149.2 452.0 L1149.2 452.0 L1149.2 452.0 L1149.2 452.0 L1149.3 452.0 L1149.3 452.0 L1149.3 452.0 L1149.3 452.0 L1149.3 452.0 L1149.4 452.0 L1149.4 452.0 L1149.4 452.0 L1149.4 452.0 L1149.4 452.0 L1149.4 452.0 L1149.5 452.0 L1149.5 452.0 L1149.5 452.0 L1149.5 452.0 L1149.5 452.0 L1149.5 452.0 L1149.5 452.0 L1149.6 452.0 L1149.6 452.0 L1149.6 452.0 L1149.6 452.0 L1149.6 452.0 L1149.6 452.0 L1149.6 452.0 L1149.7 452.0 L1149.7 452.0 L1149.7 452.0 L1149.7 452.0 L1149.7 452.0 L1149.7 452.0 L1149.7 452.0 L1149.7 452.0 L1149.7 452.0 L1149.8 451.9 L1149.8 451.9 L1149.8 451.9 L1149.8 451.9 L1149.8 451.9 L1149.8 451.9 L1149.8 451.9 L1149.8 451.9 L1149.8 451.9 L1149.9 451.9 L1149.9 451.9 L1149.9 451.9 L1149.9 451.9 L1149.9 451.9 L1149.9 451.9 L1149.9 451.9 L1149.9 451.9 L1149.9 451.9 L1149.9 451.9 L1149.9 451.9 L1149.9 451.9 L1150.0 451.9 L1150.0 451.9 L1150.0 451.9 L1150.0 451.9 L1150.0 451.9 L1150.0 451.9 L1150.0 451.9 L1150.0 451.9 L1150.0 451.9 L1150.0 451.9 L1150.0 451.9 L1150.0 451.9 L1150.0 451.9 L1150.0 451.9 L1150.0 451.9 L1150.1 451.9 L1150.1 451.9 L1150.1 451.9 L1150.1 451.9 L1150.1 451.9 L1150.1 451.9 L1150.1 451.9 L1150.1 451.9 L1150.1 451.9 L1150.1 451.9 L1150.1 451.9 L1150.1 451.9 L1150.1 451.9 L1150.1 451.9 L1150.1 451.9 L1150.1 451.9 L1150.1 451.9 L1150.1 451.9 L1150.1 451.9 L1150.1 451.9 L1150.2 451.9 L1150.2 451.9 L1150.2 451.9 L1150.2 451.9 L1150.2 451.9 L1150.2 451.9 L1150.2 451.9 L1150.2 451.9 L1150.2 451.9 L1150.2 451.9 L1150.2 451.9 L1150.2 451.9 L1150.2 451.9 L1150.2 451.9 L1150.2 451.9 L1150.2 451.9 L1150.2 451.9 L1150.2 451.9 L1150.2 451.9 L1150.2 451.9 L1150.2 451.9 L1150.2 451.9 L1150.2 451.9 L1150.2 451.9 L1150.2 451.9 L1150.2 451.9 L1150.2 451.9 L1150.2 451.9 L1150.2 451.9 L1150.2 451.9 L1150.2 451.9 L1150.3 451.9 L1150.3 451.9 L1150.3 451.9 L1150.3 451.9 L1150.3 451.9 L1150.3 451.9 L1150.3 451.9 L1150.3 451.9 L1150.3 451.9 L1150.3 451.9 L1150.3 451.9 L1150.3 451.9 L1150.3 451.9 L1150.3 451.9 L1150.3 451.9 L1150.3 451.9 L1150.3 451.9 L1150.3 451.9 L1150.3 451.9 L1150.3 451.9 L1150.3 451.9 L1150.3 451.9 L1150.3 451.9 L1150.3 451.9 L1150.3 451.9 L1150.3 451.9 L1150.3 451.9 L1150.3 451.9 L1150.3 451.9 L1150.3 451.9 L1150.3 451.9 L1150.3 451.9 L1150.3 451.9 L1150.3 451.9 L1150.3 451.9 L1150.3 451.9 L1150.3 451.9 L1150.3 451.9 L1150.3 451.9 L1150.3 451.9 L1150.3 451.9 L1150.3 451.9 L1150.3 451.9 L1150.3 451.9 L1150.3 451.9 L1150.3 451.9 L1150.3 451.9 L1150.3 451.9 L1150.3 451.9 L1150.3 451.9 L1150.3 451.9 L1150.3 451.9 L1150.3 451.9 L1150.3 451.9 L1150.3 451.9 L1150.3 451.9 L1150.3 451.9 L1150.3 451.9 L1150.3 451.9 L1150.3 451.9 L1150.3 451.9 L1150.3 451.9 L1150.3 451.9 L1150.3 451.9 L1150.3 451.9 L1150.4 451.9 L1150.4 451.9 L1150.4 451.9 L1150.4 451.9 L1150.4 451.9 L1150.4 451.9 L1150.4 451.9 L1150.4 451.9 L1150.4 451.9 L1150.4 451.9 L1150.4 451.9 L1150.4 451.9 L1150.4 451.9 L1150.4 451.9 L1150.4 451.9 L1150.4 451.9 L1150.4 451.9 L1150.4 451.9 L1150.4 451.9 L1150.4 451.9 L1150.4 451.9 L1150.4 451.9 L1150.4 451.9 L1150.4 451.9 L1150.4 451.9 L1150.4 451.9 L1150.4 451.9 L1150.4 451.9 L1150.4 451.9 L1150.4 451.9 L1150.4 451.9 L1150.4 451.9 L1150.4 451.9 L1150.4 451.9 L1150.4 451.9 L1150.4 451.9 L1150.4 451.9 L1150.4 451.9 L1150.4 451.9 L1150.4 451.9 L1150.4 451.9 L1150.4 451.9 L1150.4 451.9 L1150.4 451.9 L1150.4 451.9 L1150.4 451.9 L1150.4 451.9 L1150.4 451.9 L1150.4 451.9 L1150.4 451.9 L1150.4 451.9 L1150.4 451.9 L1150.4 451.9 L1150.4 451.9 L1150.4 451.9 L1150.4 451.9 L1150.4 451.9 L1150.4 451.9 L1150.4 451.9 L1150.4 451.9 L1150.4 451.9 L1150.4 451.9" fill="none" stroke="#d93a3a" stroke-width="1.1"/>
<path d="M1552.7 679.3 L1551.1 679.1 L1549.6 678.9 L1548.0 678.7 L1546.5 678.5 L1544.9 678.3 L1543.4 678.1 L1541.9 677.9 L1540.4 677.7 L1538.9 677.5 L1537.4 677.2 L1535.9 677.0 L1534.4 676.7 L1533.0 676.5 L1531.5 676.2 L1530.1 676.0 L1528.6 675.7 L1527.2 675.4 L1525.8 675.1 L1524.3 674.9 L1522.9 674.6 L1521.5 674.3 L1520.1 674.0 L1518.7 673.7 L1517.4 673.4 L1516.0 673.1 L1514.6 672.8 L1513.3 672.5 L1511.9 672.2 L1510.6 671.9 L1509.3 671.6 L1507.9 671.3 L1506.6 670.9 L1505.3 670.6 L1504.0 670.3 L1502.7 670.0 L1501.5 669.7 L1500.2 669.3 L1498.9 669.0 L1497.7 668.7 L1496.4 668.4 L1495.2 668.0 L1494.0 667.7 L1492.8 667.4 L1491.5 667.1 L1490.3 666.7 L1489.1 666.4 L1488.0 666.1 L1486.8 665.8 L1485.6 665.5 L1484.4 665.1 L1483.3 664.8 L1482.1 664.5 L1481.0 664.2 L1479.8 663.9 L1478.7 663.6 L1477.6 663.3 L1476.5 663.0 L1475.4 662.7 L1474.3 662.4 L1473.2 662.1 L1472.1 661.8 L1471.0 661.5 L1469.9 661.2 L1468.9 660.9 L1467.8 660.7 L1466.7 660.4 L1465.7 660.1 L1464.6 659.8 L1463.6 659.6 L1462.6 659.3 L1461.5 659.1 L1460.5 658.8 L1459.5 658.6 L1458.5 658.3 L1457.5 658.1 L1456.5 657.9 L1455.5 657.6 L1454.5 657.4 L1453.5 657.2 L1452.5 657.0 L1451.5 656.8 L1450.5 656.6 L1449.6 656.4 L1448.6 656.2 L1447.6 656.0 L1446.7 655.8 L1445.7 655.7 L1444.7 655.5 L1443.8 655.3 L1442.8 655.2 L1441.9 655.0 L1440.9 654.9 L1440.0 654.7 L1439.1 654.6 L1438.1 654.5 L1437.2 654.3 L1436.2 654.2 L1435.3 654.1 L1434.4 654.0 L1433.4 653.9 L1432.5 653.8 L1431.6 653.7 L1430.6 653.6 L1429.7 653.6 L1428.8 653.5 L1427.9 653.4 L1426.9 653.4 L1426.0 653.3 L1425.1 653.3 L1424.1 653.3 L1423.2 653.2 L1422.3 653.2 L1421.4 653.2 L1420.4 653.2 L1419.5 653.2 L1418.6 653.2 L1417.6 653.2 L1416.7 653.2 L1415.7 653.2 L1414.8 653.2 L1413.9 653.3 L1412.9 653.3 L1412.0 653.3 L1411.0 653.4 L1410.1 653.4 L1409.1 653.5 L1408.2 653.5 L1407.2 653.6 L1406.2 653.7 L1405.3 653.8 L1404.3 653.8 L1403.3 653.9 L1402.3 654.0 L1401.4 654.1 L1400.4 654.2 L1399.4 654.3 L1398.4 654.5 L1397.4 654.6 L1396.4 654.7 L1395.4 654.8 L1394.4 655.0 L1393.3 655.1 L1392.3 655.2 L1391.3 655.4 L1390.2 655.5 L1389.2 655.7 L1388.2 655.9 L1387.1 656.0 L1386.0 656.2 L1385.0 656.3 L1383.9 656.5 L1382.8 656.7 L1381.7 656.9 L1380.7 657.0 L1379.6 657.2 L1378.5 657.4 L1377.3 657.6 L1376.2 657.8 L1375.1 658.0 L1374.0 658.2 L1372.8 658.4 L1371.7 658.6 L1370.5 658.8 L1369.4 659.0 L1368.2 659.2 L1367.0 659.4 L1365.8 659.6 L1364.6 659.8 L1363.4 660.0 L1362.2 660.2 L1361.0 660.4 L1359.8 660.6 L1358.5 660.8 L1357.3 661.0 L1356.0 661.2 L1354.8 661.4 L1353.5 661.6 L1352.2 661.8 L1350.9 662.0 L1349.6 662.2 L1348.3 662.4 L1347.0 662.5 L1345.7 662.7 L1344.4 662.9 L1343.0 663.1 L1341.7 663.3 L1340.3 663.4 L1339.0 663.6 L1337.6 663.8 L1336.2 663.9 L1334.8 664.1 L1333.4 664.3 L1332.0 664.4 L1330.6 664.5 L1329.2 664.7 L1327.7 664.8 L1326.3 664.9 L1324.8 665.1 L1323.4 665.2 L1321.9 665.3 L1320.4 665.4 L1318.9 665.5 L1317.4 665.6 L1315.9 665.7 L1314.4 665.7 L1312.9 665.8 L1311.4 665.9 L1309.9 665.9 L1308.3 666.0 L1306.8 666.0 L1305.2 666.0 L1303.7 666.0 L1302.1 666.0 L1300.5 666.0 L1298.9 666.0 L1297.3 666.0 L1295.7 666.0 L1294.1 665.9 L1292.5 665.9 L1290.9 665.8 L1289.3 665.7 L1287.7 665.6 L1286.0 665.5 L1284.4 665.4 L1282.7 665.3 L1281.1 665.2 L1279.4 665.0 L1277.8 664.8 L1276.1 664.7 L1274.5 664.5 L1272.8 664.3 L1271.1 664.1 L1269.4 663.9 L1267.8 663.6 L1266.1 663.4 L1264.4 663.1 L1262.7 662.8 L1261.0 662.5 L1259.3 662.2 L1257.7 661.9 L1256.0 661.6 L1254.3 661.2 L1252.6 660.8 L1250.9 660.5 L1249.2 660.1 L1247.5 659.7 L1245.8 659.2 L1244.1 658.8 L1242.4 658.3 L1240.7 657.9 L1239.0 657.4 L1237.4 656.9 L1235.7 656.4 L1234.0 655.8 L1232.3 655.3 L1230.6 654.7 L1229.0 654.2 L1227.3 653.6 L1225.6 653.0 L1224.0 652.3 L1222.3 651.7 L1220.7 651.0 L1219.0 650.4 L1217.4 649.7 L1215.8 649.0 L1214.1 648.3 L1212.5 647.5 L1210.9 646.8 L1209.3 646.0 L1207.7 645.3 L1206.1 644.5 L1204.6 643.7 L1203.0 642.9 L1201.4 642.0 L1199.9 641.2 L1198.3 640.3 L1196.8 639.5 L1195.3 638.6 L1193.8 637.7 L1192.3 636.8 L1190.8 635.8 L1189.3 634.9 L1187.8 633.9 L1186.4 633.0 L1184.9 632.0 L1183.5 631.0 L1182.1 630.0 L1180.7 629.0 L1179.3 628.0 L1177.9 626.9 L1176.5 625.9 L1175.2 624.8 L1173.8 623.8 L1172.5 622.7 L1171.2 621.6 L1169.9 620.5 L1168.6 619.4 L1167.3 618.3 L1166.1 617.1 L1164.8 616.0 L1163.6 614.8 L1162.4 613.7 L1161.2 612.5 L1160.0 611.3 L1158.9 610.2 L1157.7 609.0 L1156.6 607.8 L1155.5 606.6 L1154.4 605.4 L1153.3 604.2 L1152.2 602.9 L1151.2 601.7 L1150.2 600.5 L1149.1 599.3 L1148.2 598.0 L1147.2 596.8 L1146.2 595.5 L1145.3 594.3 L1144.3 593.0 L1143.4 591.8 L1142.5 590.5 L1141.7 589.2 L1140.8 588.0 L1139.9 586.7 L1139.1 585.4 L1138.3 584.2 L1137.5 582.9 L1136.7 581.6 L1136.0 580.3 L1135.2 579.1 L1134.5 577.8 L1133.8 576.5 L1133.1 575.3 L1132.4 574.0 L1131.8 572.7 L1131.1 571.4 L1130.5 570.2 L1129.9 568.9 L1129.3 567.6 L1128.7 566.4 L1128.2 565.1 L1127.6 563.9 L1127.1 562.6 L1126.6 561.4 L1126.1 560.1 L1125.6 558.9 L1125.2 557.6 L1124.7 556.4 L1124.3 555.2 L1123.8 553.9 L1123.4 552.7 L1123.0 551.5 L1122.7 550.3 L1122.3 549.1 L1122.0 547.9 L1121.6 546.7 L1121.3 545.5 L1121.0 544.3 L1120.7 543.2 L1120.4 542.0 L1120.2 540.8 L1119.9 539.7 L1119.7 538.5 L1119.4 537.4 L1119.2 536.3 L1119.0 535.2 L1118.8 534.0 L1118.6 532.9 L1118.5 531.8 L1118.3 530.7 L1118.2 529.6 L1118.0 528.6 L1117.9 527.5 L1117.8 526.4 L1117.7 525.4 L1117.6 524.3 L1117.5 523.3 L1117.5 522.3 L1117.4 521.3 L1117.4 520.3 L1117.3 519.3 L1117.3 518.3 L1117.3 517.3 L1117.2 516.3 L1117.2 515.4 L1117.2 514.4 L1117.3 513.5 L1117.3 512.5 L1117.3 511.6 L1117.3 510.7 L1117.4 509.8 L1117.4 508.9 L1117.5 508.0 L1117.5 507.1 L1117.6 506.2 L1117.7 505.4 L1117.8 504.5 L1117.9 503.7 L1118.0 502.9 L1118.1 502.0 L1118.2 501.2 L1118.3 500.4 L1118.4 499.6 L1118.5 498.8 L1118.7 498.1 L1118.8 497.3 L1118.9 496.5 L1119.1 495.8 L1119.2 495.1 L1119.4 494.3 L1119.5 493.6 L1119.7 492.9 L1119.8 492.2 L1120.0 491.5 L1120.2 490.8 L1120.4 490.2 L1120.5 489.5 L1120.7 488.8 L1120.9 488.2 L1121.1 487.6 L1121.3 486.9 L1121.5 486.3 L1121.7 485.7 L1121.9 485.1 L1122.1 484.5 L1122.3 483.9 L1122.5 483.3 L1122.7 482.8 L1122.9 482.2 L1123.1 481.6 L1123.3 481.1 L1123.5 480.6 L1123.7 480.0 L1124.0 479.5 L1124.2 479.0 L1124.4 478.5 L1124.6 478.0 L1124.8 477.5 L1125.0 477.0 L1125.3 476.5 L1125.5 476.1 L1125.7 475.6 L1125.9 475.2 L1126.2 474.7 L1126.4 474.3 L1126.6 473.9 L1126.8 473.4 L1127.1 473.0 L1127.3 472.6 L1127.5 472.2 L1127.7 471.8 L1128.0 471.4 L1128.2 471.0 L1128.4 470.6 L1128.6 470.3 L1128.9 469.9 L1129.1 469.6 L1129.3 469.2 L1129.5 468.9 L1129.7 468.5 L1130.0 468.2 L1130.2 467.9 L1130.4 467.5 L1130.6 467.2 L1130.8 466.9 L1131.0 466.6 L1131.3 466.3 L1131.5 466.0 L1131.7 465.7 L1131.9 465.4 L1132.1 465.1 L1132.3 464.9 L1132.5 464.6 L1132.7 464.3 L1132.9 464.1 L1133.2 463.8 L1133.4 463.6 L1133.6 463.3 L1133.8 463.1 L1134.0 462.8 L1134.2 462.6 L1134.4 462.4 L1134.6 462.2 L1134.7 461.9 L1134.9 461.7 L1135.1 461.5 L1135.3 461.3 L1135.5 461.1 L1135.7 460.9 L1135.9 460.7 L1136.1 460.5 L1136.3 460.3 L1136.4 460.2 L1136.6 460.0 L1136.8 459.8 L1137.0 459.6 L1137.1 459.5 L1137.3 459.3 L1137.5 459.1 L1137.7 459.0 L1137.8 458.8 L1138.0 458.7 L1138.2 458.5 L1138.3 458.4 L1138.5 458.2 L1138.6 458.1 L1138.8 457.9 L1139.0 457.8 L1139.1 457.7 L1139.3 457.6 L1139.4 457.4 L1139.6 457.3 L1139.7 457.2 L1139.9 457.1 L1140.0 456.9 L1140.2 456.8 L1140.3 456.7 L1140.4 456.6 L1140.6 456.5 L1140.7 456.4 L1140.9 456.3 L1141.0 456.2 L1141.1 456.1 L1141.3 456.0 L1141.4 455.9 L1141.5 455.8 L1141.6 455.7 L1141.8 455.6 L1141.9 455.6 L1142.0 455.5 L1142.1 455.4 L1142.3 455.3 L1142.4 455.2 L1142.5 455.2 L1142.6 455.1 L1142.7 455.0 L1142.8 454.9 L1143.0 454.9 L1143.1 454.8 L1143.2 454.7 L1143.3 454.7 L1143.4 454.6 L1143.5 454.5 L1143.6 454.5 L1143.7 454.4 L1143.8 454.4 L1143.9 454.3 L1144.0 454.2 L1144.1 454.2 L1144.2 454.1 L1144.3 454.1 L1144.4 454.0 L1144.5 454.0 L1144.5 453.9 L1144.6 453.9 L1144.7 453.8 L1144.8 453.8 L1144.9 453.7 L1145.0 453.7 L1145.1 453.7 L1145.1 453.6 L1145.2 453.6 L1145.3 453.5 L1145.4 453.5 L1145.5 453.5 L1145.5 453.4 L1145.6 453.4 L1145.7 453.3 L1145.8 453.3 L1145.8 453.3 L1145.9 453.2 L1146.0 453.2 L1146.0 453.2 L1146.1 453.2 L1146.2 453.1 L1146.2 453.1 L1146.3 453.1 L1146.4 453.0 L1146.4 453.0 L1146.5 453.0 L1146.6 453.0 L1146.6 452.9 L1146.7 452.9 L1146.7 452.9 L1146.8 452.9 L1146.9 452.8 L1146.9 452.8 L1147.0 452.8 L1147.0 452.8 L1147.1 452.7 L1147.1 452.7 L1147.2 452.7 L1147.2 452.7 L1147.3 452.7 L1147.3 452.6 L1147.4 452.6 L1147.4 452.6 L1147.5 452.6 L1147.5 452.6 L1147.6 452.6 L1147.6 452.5 L1147.7 452.5 L1147.7 452.5 L1147.7 452.5 L1147.8 452.5 L1147.8 452.5 L1147.9 452.5 L1147.9 452.4 L1147.9 452.4 L1148.0 452.4 L1148.0 452.4 L1148.1 452.4 L1148.1 452.4 L1148.1 452.4 L1148.2 452.4 L1148.2 452.3 L1148.2 452.3 L1148.3 452.3 L1148.3 452.3 L1148.4 452.3 L1148.4 452.3 L1148.4 452.3 L1148.4 452.3 L1148.5 452.3 L1148.5 452.3 L1148.5 452.2 L1148.6 452.2 L1148.6 452.2 L1148.6 452.2 L1148.7 452.2 L1148.7 452.2 L1148.7 452.2 L1148.7 452.2 L1148.8 452.2 L1148.8 452.2 L1148.8 452.2 L1148.8 452.2 L1148.9 452.2 L1148.9 452.2 L1148.9 452.1 L1148.9 452.1 L1149.0 452.1 L1149.0 452.1 L1149.0 452.1 L1149.0 452.1 L1149.1 452.1 L1149.1 452.1 L1149.1 452.1 L1149.1 452.1 L1149.1 452.1 L1149.2 452.1 L1149.2 452.1 L1149.2 452.1 L1149.2 452.1 L1149.2 452.1 L1149.3 452.1 L1149.3 452.1 L1149.3 452.1 L1149.3 452.1 L1149.3 452.0 L1149.4 452.0 L1149.4 452.0 L1149.4 452.0 L1149.4 452.0 L1149.4 452.0 L1149.4 452.0 L1149.5 452.0 L1149.5 452.0 L1149.5 452.0 L1149.5 452.0 L1149.5 452.0 L1149.5 452.0 L1149.5 452.0 L1149.6 452.0 L1149.6 452.0 L1149.6 452.0 L1149.6 452.0 L1149.6 452.0 L1149.6 452.0 L1149.6 452.0 L1149.7 452.0 L1149.7 452.0 L1149.7 452.0 L1149.7 452.0 L1149.7 452.0 L1149.7 452.0 L1149.7 452.0 L1149.7 452.0 L1149.7 452.0 L1149.8 452.0 L1149.8 452.0 L1149.8 452.0 L1149.8 452.0 L1149.8 452.0 L1149.8 452.0 L1149.8 452.0 L1149.8 452.0 L1149.8 452.0 L1149.8 452.0 L1149.9 452.0 L1149.9 452.0 L1149.9 452.0 L1149.9 452.0 L1149.9 451.9 L1149.9 451.9 L1149.9 451.9 L1149.9 451.9 L1149.9 451.9 L1149.9 451.9 L1149.9 451.9 L1149.9 451.9 L1150.0 451.9 L1150.0 451.9 L1150.0 451.9 L1150.0 451.9 L1150.0 451.9 L1150.0 451.9 L1150.0 451.9 L1150.0 451.9 L1150.0 451.9 L1150.0 451.9 L1150.0 451.9 L1150.0 451.9 L1150.0 451.9 L1150.0 451.9 L1150.0 451.9 L1150.1 451.9 L1150.1 451.9 L1150.1 451.9 L1150.1 451.9 L1150.1 451.9 L1150.1 451.9 L1150.1 451.9 L1150.1 451.9 L1150.1 451.9 L1150.1 451.9 L1150.1 451.9 L1150.1 451.9 L1150.1 451.9 L1150.1 451.9 L1150.1 451.9 L1150.1 451.9 L1150.1 451.9 L1150.1 451.9 L1150.1 451.9 L1150.1 451.9 L1150.2 451.9 L1150.2 451.9 L1150.2 451.9 L1150.2 451.9 L1150.2 451.9 L1150.2 451.9 L1150.2 451.9 L1150.2 451.9 L1150.2 451.9 L1150.2 451.9 L1150.2 451.9 L1150.2 451.9 L1150.2 451.9 L1150.2 451.9 L1150.2 451.9 L1150.2 451.9 L1150.2 451.9 L1150.2 451.9 L1150.2 451.9 L1150.2 451.9 L1150.2 451.9 L1150.2 451.9 L1150.2 451.9 L1150.2 451.9 L1150.2 451.9 L1150.2 451.9 L1150.2 451.9 L1150.2 451.9 L1150.2 451.9 L1150.2 451.9 L1150.3 451.9 L1150.3 451.9 L1150.3 451.9 L1150.3 451.9 L1150.3 451.9 L1150.3 451.9 L1150.3 451.9 L1150.3 451.9 L1150.3 451.9 L1150.3 451.9 L1150.3 451.9 L1150.3 451.9 L1150.3 451.9 L1150.3 451.9 L1150.3 451.9 L1150.3 451.9 L1150.3 451.9 L1150.3 451.9 L1150.3 451.9 L1150.3 451.9 L1150.3 451.9 L1150.3 451.9 L1150.3 451.9 L1150.3 451.9 L1150.3 451.9 L1150.3 451.9 L1150.3 451.9 L1150.3 451.9 L1150.3 451.9 L1150.3 451.9 L1150.3 451.9 L1150.3 451.9 L1150.3 451.9 L1150.3 451.9 L1150.3 451.9 L1150.3 451.9 L1150.3 451.9 L1150.3 451.9 L1150.3 451.9 L1150.3 451.9 L1150.3 451.9 L1150.3 451.9 L1150.3 451.9 L1150.3 451.9 L1150.3 451.9 L1150.3 451.9 L1150.3 451.9 L1150.3 451.9 L1150.3 451.9 L1150.3 451.9 L1150.3 451.9 L1150.3 451.9 L1150.3 451.9 L1150.3 451.9 L1150.3 451.9 L1150.3 451.9 L1150.3 451.9 L1150.3 451.9 L1150.3 451.9 L1150.3 451.9 L1150.3 451.9 L1150.3 451.9 L1150.3 451.9 L1150.3 451.9 L1150.3 451.9 L1150.4 451.9 L1150.4 451.9 L1150.4 451.9 L1150.4 451.9 L1150.4 451.9 L1150.4 451.9 L1150.4 451.9 L1150.4 451.9 L1150.4 451.9 L1150.4 451.9 L1150.4 451.9 L1150.4 451.9 L1150.4 451.9 L1150.4 451.9 L1150.4 451.9 L1150.4 451.9 L1150.4 451.9 L1150.4 451.9 L1150.4 451.9 L1150.4 451.9 L1150.4 451.9 L1150.4 451.9 L1150.4 451.9 L1150.4 451.9 L1150.4 451.9 L1150.4 451.9 L1150.4 451.9 L1150.4 451.9 L1150.4 451.9 L1150.4 451.9 L1150.4 451.9 L1150.4 451.9 L1150.4 451.9 L1150.4 451.9 L1150.4 451.9 L1150.4 451.9 L1150.4 451.9 L1150.4 451.9 L1150.4 451.9 L1150.4 451.9 L1150.4 451.9 L1150.4 451.9 L1150.4 451.9 L1150.4 451.9 L1150.4 451.9 L1150.4 451.9 L1150.4 451.9 L1150.4 451.9 L1150.4 451.9 L1150.4 451.9 L1150.4 451.9 L1150.4 451.9 L1150.4 451.9 L1150.4 451.9 L1150.4 451.9 L1150.4 451.9 L1150.4 451.9 L1150.4 451.9 L1150.4 451.9 L1150.4 451.9 L1150.4 451.9 L1150.4 451.9 L1150.4 451.9 L1150.4 451.9 L1150.4 451.9 L1150.4 451.9 L1150.4 451.9 L1150.4 451.9 L1150.4 451.9 L1150.4 451.9 L1150.4 451.9 L1150.4 451.9 L1150.4 451.9 L1150.4 451.9 L1150.4 451.9 L1150.4 451.9 L1150.4 451.9 L1150.4 451.9 L1150.4 451.9 L1150.4 451.9 L1150.4 451.9 L1150.4 451.9 L1150.4 451.9 L1150.4 451.9 L1150.4 451.9 L1150.4 451.9 L1150.4 451.9 L1150.4 451.9 L1150.4 451.9 L1150.4 451.9 L1150.4 451.9 L1150.4 451.9 L1150.4 451.9 L1150.4 451.9 L1150.4 451.9 L1150.4 451.9 L1150.4 451.9 L1150.4 451.9 L1150.4 451.9 L1150.4 451.9 L1150.4 451.9 L1150.4 451.9 L1150.4 451.9 L1150.4 451.9 L1150.4 451.9 L1150.4 451.9" fill="none" stroke="#2446cf" stroke-width="1.1"/>
<path d="M1080.8 451.9 L1080.8 453.8 L1080.9 455.8 L1081.0 457.7 L1081.2 459.6 L1081.5 461.5 L1081.8 463.5 L1082.1 465.4 L1082.5 467.2 L1083.0 469.1 L1083.5 471.0 L1084.0 472.8 L1084.6 474.7 L1085.3 476.5 L1086.0 478.3 L1086.8 480.1 L1087.6 481.8 L1088.4 483.6 L1089.3 485.3 L1090.3 487.0 L1091.3 488.6 L1092.3 490.3 L1093.4 491.9 L1094.5 493.4 L1095.7 495.0 L1096.9 496.5 L1098.2 497.9 L1099.5 499.4 L1100.8 500.8 L1102.2 502.1 L1103.6 503.4 L1105.1 504.7 L1106.6 506.0 L1108.1 507.2 L1109.6 508.3 L1111.2 509.4 L1112.8 510.5 L1114.5 511.5 L1116.1 512.5 L1117.8 513.4" fill="none" stroke="#178a17" stroke-width="2.2"/>
<path d="M1150.4 451.9 L1085.26 574.92" stroke="#178a17" stroke-width="2.2"/>
<path d="M1046.0 451.9 L1046.0 455.0 L1046.2 458.2 L1046.4 461.3 L1046.8 464.4 L1047.2 467.6 L1047.7 470.7 L1048.3 473.7 L1049.0 476.8 L1049.8 479.8 L1050.7 482.9 L1051.7 485.8 L1052.7 488.8 L1053.9 491.7 L1055.1 494.6 L1056.5 497.4 L1057.9 500.3 L1059.4 503.0 L1061.0 505.7 L1062.6 508.4 L1064.4 511.0 L1066.2 513.6 L1068.1 516.1 L1070.0 518.5 L1072.1 520.9 L1074.2 523.3 L1076.4 525.5 L1078.6 527.7 L1080.9 529.8 L1083.3 531.9 L1085.7 533.9 L1088.2 535.8 L1090.8 537.6 L1093.4 539.4 L1096.1 541.0 L1098.8 542.6 L1101.5 544.1 L1104.3 545.6 L1107.2 546.9 L1110.0 548.2 L1113.0 549.4 L1115.9 550.4 L1118.9 551.4 L1121.9 552.3 L1124.9 553.1 L1128.0 553.9 L1131.1 554.5 L1134.2 555.0 L1137.3 555.5 L1140.4 555.8" fill="none" stroke="#38dff0" stroke-width="2" stroke-dasharray="6 3"/>
<path d="M1150.4 451.9 L1137.06 590.46" stroke="#38dff0" stroke-width="2" stroke-dasharray="6 3"/>
<circle cx="1085.26" cy="574.92" r="4.2" fill="#fff" stroke="#178a17" stroke-width="2.2"/>
<circle cx="1137.06" cy="590.46" r="4.2" fill="#fff" stroke="#38dff0" stroke-width="2.2"/>
</g>
<path d="M788.48 165.5v2.6M788.48 738.2v-2.6M802.4 165.5v2.6M802.4 738.2v-2.6M816.32 165.5v2.6M816.32 738.2v-2.6M830.24 165.5v2.6M830.24 738.2v-2.6M844.16 165.5v2.6M844.16 738.2v-2.6M858.08 165.5v2.6M858.08 738.2v-2.6M872 165.5v4.5M872 738.2v-4.5M885.92 165.5v2.6M885.92 738.2v-2.6M899.84 165.5v2.6M899.84 738.2v-2.6M913.76 165.5v2.6M913.76 738.2v-2.6M927.68 165.5v2.6M927.68 738.2v-2.6M941.6 165.5v2.6M941.6 738.2v-2.6M955.52 165.5v2.6M955.52 738.2v-2.6M969.44 165.5v2.6M969.44 738.2v-2.6M983.36 165.5v2.6M983.36 738.2v-2.6M997.28 165.5v2.6M997.28 738.2v-2.6M1011.2 165.5v4.5M1011.2 738.2v-4.5M1025.12 165.5v2.6M1025.12 738.2v-2.6M1039.04 165.5v2.6M1039.04 738.2v-2.6M1052.96 165.5v2.6M1052.96 738.2v-2.6M1066.88 165.5v2.6M1066.88 738.2v-2.6M1080.8 165.5v2.6M1080.8 738.2v-2.6M1094.72 165.5v2.6M1094.72 738.2v-2.6M1108.64 165.5v2.6M1108.64 738.2v-2.6M1122.56 165.5v2.6M1122.56 738.2v-2.6M1136.48 165.5v2.6M1136.48 738.2v-2.6M1150.4 165.5v4.5M1150.4 738.2v-4.5M1164.32 165.5v2.6M1164.32 738.2v-2.6M1178.24 165.5v2.6M1178.24 738.2v-2.6M1192.16 165.5v2.6M1192.16 738.2v-2.6M1206.08 165.5v2.6M1206.08 738.2v-2.6M1220 165.5v2.6M1220 738.2v-2.6M1233.92 165.5v2.6M1233.92 738.2v-2.6M1247.84 165.5v2.6M1247.84 738.2v-2.6M1261.76 165.5v2.6M1261.76 738.2v-2.6M1275.68 165.5v2.6M1275.68 738.2v-2.6M1289.6 165.5v4.5M1289.6 738.2v-4.5M1303.52 165.5v2.6M1303.52 738.2v-2.6M1317.44 165.5v2.6M1317.44 738.2v-2.6M1331.36 165.5v2.6M1331.36 738.2v-2.6M1345.28 165.5v2.6M1345.28 738.2v-2.6M1359.2 165.5v2.6M1359.2 738.2v-2.6M1373.12 165.5v2.6M1373.12 738.2v-2.6M1387.04 165.5v2.6M1387.04 738.2v-2.6M1400.96 165.5v2.6M1400.96 738.2v-2.6M1414.88 165.5v2.6M1414.88 738.2v-2.6M1428.8 165.5v4.5M1428.8 738.2v-4.5M1442.72 165.5v2.6M1442.72 738.2v-2.6M1456.64 165.5v2.6M1456.64 738.2v-2.6M1470.56 165.5v2.6M1470.56 738.2v-2.6M1484.48 165.5v2.6M1484.48 738.2v-2.6M1498.4 165.5v2.6M1498.4 738.2v-2.6M1512.32 165.5v2.6M1512.32 738.2v-2.6M788 730.3h4.5M1513 730.3h-4.5M788 716.38h2.6M1513 716.38h-2.6M788 702.46h2.6M1513 702.46h-2.6M788 688.54h2.6M1513 688.54h-2.6M788 674.62h2.6M1513 674.62h-2.6M788 660.7h2.6M1513 660.7h-2.6M788 646.78h2.6M1513 646.78h-2.6M788 632.86h2.6M1513 632.86h-2.6M788 618.94h2.6M1513 618.94h-2.6M788 605.02h2.6M1513 605.02h-2.6M788 591.1h4.5M1513 591.1h-4.5M788 577.18h2.6M1513 577.18h-2.6M788 563.26h2.6M1513 563.26h-2.6M788 549.34h2.6M1513 549.34h-2.6M788 535.42h2.6M1513 535.42h-2.6M788 521.5h2.6M1513 521.5h-2.6M788 507.58h2.6M1513 507.58h-2.6M788 493.66h2.6M1513 493.66h-2.6M788 479.74h2.6M1513 479.74h-2.6M788 465.82h2.6M1513 465.82h-2.6M788 451.9h4.5M1513 451.9h-4.5M788 437.98h2.6M1513 437.98h-2.6M788 424.06h2.6M1513 424.06h-2.6M788 410.14h2.6M1513 410.14h-2.6M788 396.22h2.6M1513 396.22h-2.6M788 382.3h2.6M1513 382.3h-2.6M788 368.38h2.6M1513 368.38h-2.6M788 354.46h2.6M1513 354.46h-2.6M788 340.54h2.6M1513 340.54h-2.6M788 326.62h2.6M1513 326.62h-2.6M788 312.7h4.5M1513 312.7h-4.5M788 298.78h2.6M1513 298.78h-2.6M788 284.86h2.6M1513 284.86h-2.6M788 270.94h2.6M1513 270.94h-2.6M788 257.02h2.6M1513 257.02h-2.6M788 243.1h2.6M1513 243.1h-2.6M788 229.18h2.6M1513 229.18h-2.6M788 215.26h2.6M1513 215.26h-2.6M788 201.34h2.6M1513 201.34h-2.6M788 187.42h2.6M1513 187.42h-2.6M788 173.5h4.5M1513 173.5h-4.5" stroke="#1a1a1a" stroke-width="1.3" fill="none"/>
<rect x="788" y="165.5" width="725" height="572.7" fill="none" stroke="#1e1e1e" stroke-width="1.35"/>
<text x="802.4" y="757.8" font-size="16" text-anchor="middle" fill="#1c1c1c" >-2.5</text>
<text x="872" y="757.8" font-size="16" text-anchor="middle" fill="#1c1c1c" >-2</text>
<text x="941.6" y="757.8" font-size="16" text-anchor="middle" fill="#1c1c1c" >-1.5</text>
<text x="1011.2" y="757.8" font-size="16" text-anchor="middle" fill="#1c1c1c" >-1</text>
<text x="1080.8" y="757.8" font-size="16" text-anchor="middle" fill="#1c1c1c" >-0.5</text>
<text x="1150.4" y="757.8" font-size="16" text-anchor="middle" fill="#1c1c1c" >0</text>
<text x="1220" y="757.8" font-size="16" text-anchor="middle" fill="#1c1c1c" >0.5</text>
<text x="1289.6" y="757.8" font-size="16" text-anchor="middle" fill="#1c1c1c" >1</text>
<text x="1359.2" y="757.8" font-size="16" text-anchor="middle" fill="#1c1c1c" >1.5</text>
<text x="1428.8" y="757.8" font-size="16" text-anchor="middle" fill="#1c1c1c" >2</text>
<text x="1512.5" y="757.8" font-size="16" text-anchor="end" fill="#1c1c1c" >Re(L)</text>
<text x="782.6" y="736.1" font-size="16" text-anchor="end" fill="#1c1c1c" >-2</text>
<text x="782.6" y="666.5" font-size="16" text-anchor="end" fill="#1c1c1c" >-1.5</text>
<text x="782.6" y="596.9" font-size="16" text-anchor="end" fill="#1c1c1c" >-1</text>
<text x="782.6" y="527.3" font-size="16" text-anchor="end" fill="#1c1c1c" >-0.5</text>
<text x="782.6" y="457.7" font-size="16" text-anchor="end" fill="#1c1c1c" >0</text>
<text x="782.6" y="388.1" font-size="16" text-anchor="end" fill="#1c1c1c" >0.5</text>
<text x="782.6" y="318.5" font-size="16" text-anchor="end" fill="#1c1c1c" >1</text>
<text x="782.6" y="248.9" font-size="16" text-anchor="end" fill="#1c1c1c" >1.5</text>
<text x="782.3" y="181.7" font-size="16" text-anchor="end" fill="#1c1c1c" >Im(L)</text>
<rect x="1494.5" y="143.9" width="17" height="17" rx="3" fill="#fff" opacity="0.6"/>
<rect x="1501.1" y="144" width="3.8" height="3.6" fill="#0a0a0a" transform="rotate(0 1503 152.4)"/>
<rect x="1501.1" y="144" width="3.8" height="3.6" fill="#0a0a0a" transform="rotate(60 1503 152.4)"/>
<rect x="1501.1" y="144" width="3.8" height="3.6" fill="#0a0a0a" transform="rotate(120 1503 152.4)"/>
<rect x="1501.1" y="144" width="3.8" height="3.6" fill="#0a0a0a" transform="rotate(180 1503 152.4)"/>
<rect x="1501.1" y="144" width="3.8" height="3.6" fill="#0a0a0a" transform="rotate(240 1503 152.4)"/>
<rect x="1501.1" y="144" width="3.8" height="3.6" fill="#0a0a0a" transform="rotate(300 1503 152.4)"/>
<circle cx="1503" cy="152.4" r="5.5" fill="none" stroke="#0a0a0a" stroke-width="2.3"/>
<path d="M1500.7 153 Q1503 152 1505.3 153 L1503.5 156 H1502.5 Z" fill="#0a0a0a"/>
<path d="M1501 150.6 L1501.8 152.7 M1505 150.6 L1504.2 152.7" stroke="#888" stroke-width="0.8"/>
<rect x="1416.4" y="626.3" width="88.5" height="96" fill="#fff" stroke="#1a1a1a" stroke-width="1.3"/>
<text x="1434.9" y="644.8" font-size="16" text-anchor="start" fill="#1c1c1c" >KG</text>
<path d="M1420 638.5h5.5M1428 638.5h2.8" stroke="#d93a3a" stroke-width="1.1"/>
<text x="1434.9" y="668.8" font-size="16" text-anchor="start" fill="#1c1c1c" >CG</text>
<path d="M1420 662.5h5.5M1428 662.5h2.8" stroke="#2446cf" stroke-width="1.1"/>
<text x="1434.9" y="692.8" font-size="16" text-anchor="start" fill="#1c1c1c" >PM</text>
<path d="M1419.5 686.5H1431" stroke="#178a17" stroke-width="2.4"/>
<text x="1434.9" y="716.8" font-size="16" text-anchor="start" fill="#1c1c1c" >PM_des</text>
<path d="M1419.5 710.5h6M1427.5 710.5h3.5" stroke="#38dff0" stroke-width="2.4"/>
<text x="788" y="794.8" font-size="16" text-anchor="start" font-weight="bold" fill="#0a0a0a" >Time response</text>
<rect x="788" y="803.7" width="725" height="225.39999999999986" fill="#fff"/>
<line x1="788" y1="1012.9" x2="1513" y2="1012.9" stroke="#1e1e1e" stroke-width="1.6"/>
<line x1="802.4" y1="803.7" x2="802.4" y2="1029.1" stroke="#111" stroke-width="1.2"/>
<line x1="788" y1="892.1" x2="1513" y2="892.1" stroke="#238a23" stroke-width="1.1" stroke-dasharray="1.1 3.15"/>
<g clip-path="url(#tclip)"><path d="M802.4 1012.9 L803.1 1012.6 L804.1 1012.4 L805.0 1012.2 L805.9 1012.0 L806.8 1011.7 L807.8 1011.4 L808.7 1011.1 L809.6 1010.7 L810.5 1010.3 L811.4 1009.9 L812.4 1009.4 L813.3 1009.0 L814.2 1008.4 L815.1 1007.9 L816.1 1007.3 L817.0 1006.7 L817.9 1006.1 L818.8 1005.5 L819.7 1004.8 L820.7 1004.2 L821.6 1003.4 L822.5 1002.7 L823.4 1002.0 L824.4 1001.2 L825.3 1000.4 L826.2 999.6 L827.1 998.8 L828.0 998.0 L829.0 997.1 L829.9 996.2 L830.8 995.3 L831.7 994.4 L832.7 993.5 L833.6 992.6 L834.5 991.7 L835.4 990.7 L836.3 989.7 L837.3 988.8 L838.2 987.8 L839.1 986.8 L840.0 985.8 L841.0 984.8 L841.9 983.7 L842.8 982.7 L843.7 981.7 L844.7 980.6 L845.6 979.6 L846.5 978.5 L847.4 977.5 L848.3 976.4 L849.3 975.4 L850.2 974.3 L851.1 973.2 L852.0 972.1 L853.0 971.1 L853.9 970.0 L854.8 968.9 L855.7 967.8 L856.6 966.7 L857.6 965.7 L858.5 964.6 L859.4 963.5 L860.3 962.4 L861.3 961.3 L862.2 960.3 L863.1 959.2 L864.0 958.1 L864.9 957.1 L865.9 956.0 L866.8 954.9 L867.7 953.9 L868.6 952.8 L869.6 951.8 L870.5 950.7 L871.4 949.7 L872.3 948.7 L873.2 947.6 L874.2 946.6 L875.1 945.6 L876.0 944.6 L876.9 943.6 L877.9 942.6 L878.8 941.6 L879.7 940.7 L880.6 939.7 L881.6 938.7 L882.5 937.8 L883.4 936.8 L884.3 935.9 L885.2 935.0 L886.2 934.1 L887.1 933.2 L888.0 932.3 L888.9 931.4 L889.9 930.5 L890.8 929.6 L891.7 928.8 L892.6 927.9 L893.5 927.1 L894.5 926.2 L895.4 925.4 L896.3 924.6 L897.2 923.8 L898.2 923.0 L899.1 922.3 L900.0 921.5 L900.9 920.7 L901.8 920.0 L902.8 919.3 L903.7 918.6 L904.6 917.8 L905.5 917.1 L906.5 916.5 L907.4 915.8 L908.3 915.1 L909.2 914.5 L910.1 913.8 L911.1 913.2 L912.0 912.6 L912.9 912.0 L913.8 911.4 L914.8 910.8 L915.7 910.2 L916.6 909.7 L917.5 909.1 L918.5 908.6 L919.4 908.1 L920.3 907.5 L921.2 907.0 L922.1 906.5 L923.1 906.1 L924.0 905.6 L924.9 905.1 L925.8 904.7 L926.8 904.3 L927.7 903.8 L928.6 903.4 L929.5 903.0 L930.4 902.6 L931.4 902.3 L932.3 901.9 L933.2 901.5 L934.1 901.2 L935.1 900.8 L936.0 900.5 L936.9 900.2 L937.8 899.9 L938.7 899.6 L939.7 899.3 L940.6 899.0 L941.5 898.8 L942.4 898.5 L943.4 898.3 L944.3 898.0 L945.2 897.8 L946.1 897.6 L947.0 897.4 L948.0 897.2 L948.9 897.0 L949.8 896.8 L950.7 896.7 L951.7 896.5 L952.6 896.4 L953.5 896.2 L954.4 896.1 L955.4 896.0 L956.3 895.8 L957.2 895.7 L958.1 895.6 L959.0 895.5 L960.0 895.5 L960.9 895.4 L961.8 895.3 L962.7 895.2 L963.7 895.2 L964.6 895.1 L965.5 895.1 L966.4 895.1 L967.3 895.1 L968.3 895.0 L969.2 895.0 L970.1 895.0 L971.0 895.0 L972.0 895.0 L972.9 895.0 L973.8 895.1 L974.7 895.1 L975.6 895.1 L976.6 895.2 L977.5 895.2 L978.4 895.2 L979.3 895.3 L980.3 895.4 L981.2 895.4 L982.1 895.5 L983.0 895.6 L983.9 895.6 L984.9 895.7 L985.8 895.8 L986.7 895.9 L987.6 896.0 L988.6 896.1 L989.5 896.2 L990.4 896.3 L991.3 896.4 L992.3 896.6 L993.2 896.7 L994.1 896.8 L995.0 896.9 L995.9 897.1 L996.9 897.2 L997.8 897.3 L998.7 897.5 L999.6 897.6 L1000.6 897.8 L1001.5 897.9 L1002.4 898.1 L1003.3 898.2 L1004.2 898.4 L1005.2 898.5 L1006.1 898.7 L1007.0 898.9 L1007.9 899.0 L1008.9 899.2 L1009.8 899.4 L1010.7 899.5 L1011.6 899.7 L1012.5 899.9 L1013.5 900.0 L1014.4 900.2 L1015.3 900.4 L1016.2 900.6 L1017.2 900.8 L1018.1 900.9 L1019.0 901.1 L1019.9 901.3 L1020.8 901.5 L1021.8 901.7 L1022.7 901.8 L1023.6 902.0 L1024.5 902.2 L1025.5 902.4 L1026.4 902.6 L1027.3 902.8 L1028.2 903.0 L1029.2 903.1 L1030.1 903.3 L1031.0 903.5 L1031.9 903.7 L1032.8 903.9 L1033.8 904.1 L1034.7 904.2 L1035.6 904.4 L1036.5 904.6 L1037.5 904.8 L1038.4 905.0 L1039.3 905.2 L1040.2 905.3 L1041.1 905.5 L1042.1 905.7 L1043.0 905.9 L1043.9 906.1 L1044.8 906.2 L1045.8 906.4 L1046.7 906.6 L1047.6 906.8 L1048.5 906.9 L1049.4 907.1 L1050.4 907.3 L1051.3 907.4 L1052.2 907.6 L1053.1 907.8 L1054.1 907.9 L1055.0 908.1 L1055.9 908.3 L1056.8 908.4 L1057.7 908.6 L1058.7 908.7 L1059.6 908.9 L1060.5 909.0 L1061.4 909.2 L1062.4 909.4 L1063.3 909.5 L1064.2 909.6 L1065.1 909.8 L1066.1 909.9 L1067.0 910.1 L1067.9 910.2 L1068.8 910.4 L1069.7 910.5 L1070.7 910.6 L1071.6 910.8 L1072.5 910.9 L1073.4 911.0 L1074.4 911.2 L1075.3 911.3 L1076.2 911.4 L1077.1 911.5 L1078.0 911.7 L1079.0 911.8 L1079.9 911.9 L1080.8 912.0 L1081.7 912.1 L1082.7 912.2 L1083.6 912.3 L1084.5 912.4 L1085.4 912.6 L1086.3 912.7 L1087.3 912.8 L1088.2 912.9 L1089.1 913.0 L1090.0 913.1 L1091.0 913.1 L1091.9 913.2 L1092.8 913.3 L1093.7 913.4 L1094.6 913.5 L1095.6 913.6 L1096.5 913.7 L1097.4 913.8 L1098.3 913.8 L1099.3 913.9 L1100.2 914.0 L1101.1 914.1 L1102.0 914.1 L1103.0 914.2 L1103.9 914.3 L1104.8 914.3 L1105.7 914.4 L1106.6 914.5 L1107.6 914.5 L1108.5 914.6 L1109.4 914.6 L1110.3 914.7 L1111.3 914.7 L1112.2 914.8 L1113.1 914.8 L1114.0 914.9 L1114.9 914.9 L1115.9 915.0 L1116.8 915.0 L1117.7 915.1 L1118.6 915.1 L1119.6 915.1 L1120.5 915.2 L1121.4 915.2 L1122.3 915.2 L1123.2 915.3 L1124.2 915.3 L1125.1 915.3 L1126.0 915.4 L1126.9 915.4 L1127.9 915.4 L1128.8 915.4 L1129.7 915.5 L1130.6 915.5 L1131.5 915.5 L1132.5 915.5 L1133.4 915.5 L1134.3 915.5 L1135.2 915.6 L1136.2 915.6 L1137.1 915.6 L1138.0 915.6 L1138.9 915.6 L1139.9 915.6 L1140.8 915.6 L1141.7 915.6 L1142.6 915.6 L1143.5 915.6 L1144.5 915.6 L1145.4 915.6 L1146.3 915.6 L1147.2 915.6 L1148.2 915.6 L1149.1 915.6 L1150.0 915.6 L1150.9 915.6 L1151.8 915.6 L1152.8 915.6 L1153.7 915.6 L1154.6 915.6 L1155.5 915.6 L1156.5 915.6 L1157.4 915.5 L1158.3 915.5 L1159.2 915.5 L1160.1 915.5 L1161.1 915.5 L1162.0 915.5 L1162.9 915.5 L1163.8 915.4 L1164.8 915.4 L1165.0 915.4 L1165.3 915.3 L1165.7 915.2 L1166.1 915.1 L1166.6 915.0 L1167.2 914.8 L1167.9 914.7 L1168.8 914.5 L1169.8 914.3 L1170.9 914.2 L1172.2 914.0 L1173.6 913.8 L1175.0 913.6 L1176.5 913.3 L1178.1 912.9 L1179.7 912.5 L1181.3 912.0 L1183.1 911.5 L1184.8 910.9 L1186.7 910.2 L1188.6 909.5 L1190.5 908.7 L1192.6 907.9 L1194.8 907.0 L1197.1 906.0 L1199.5 904.9 L1202.1 903.7 L1204.7 902.5 L1207.4 901.2 L1210.0 899.9 L1212.7 898.7 L1215.3 897.4 L1217.9 896.1 L1220.4 894.9 L1223.0 893.6 L1225.6 892.2 L1228.2 890.9 L1230.8 889.6 L1233.3 888.4 L1235.9 887.1 L1238.5 885.8 L1241.0 884.6 L1243.6 883.3 L1246.2 882.1 L1248.7 880.9 L1251.3 879.7 L1253.8 878.6 L1256.4 877.5 L1259.0 876.5 L1261.7 875.5 L1264.4 874.6 L1267.1 873.7 L1269.8 872.9 L1272.3 872.1 L1274.8 871.4 L1277.0 870.7 L1279.0 870.1 L1280.8 869.6 L1282.3 869.1 L1283.9 868.8 L1285.4 868.4 L1287.0 868.0 L1288.7 867.7 L1290.7 867.3 L1292.9 866.9 L1295.3 866.5 L1297.8 866.1 L1300.4 865.7 L1303.1 865.4 L1305.8 865.1 L1308.5 864.8 L1311.2 864.5 L1314.0 864.3 L1317.1 864.1 L1320.3 864.0 L1323.5 863.9 L1326.5 863.8 L1329.2 863.7 L1331.5 863.7 L1333.2 863.6 L1343.3 835.8 L1352.9 853.1 L1372.4 871.8 L1382.7 867.1 L1391.9 865.3 L1401.2 870.4 L1411.1 887.9 L1420.0 876.8 L1430.0 857.2 L1439.2 865.3 L1449.5 875.0 L1459.9 881.0 L1469.1 873.4 L1478.3 869.4 L1488.2 882.1 L1497.9 874.1 L1513.0 883.3" fill="none" stroke="#d62a2a" stroke-width="2.2" stroke-linejoin="round"/>
<path d="M802.4 1012.9 L803.3 1012.8 L804.2 1012.8 L805.2 1012.7 L806.1 1012.6 L807.0 1012.5 L807.9 1012.3 L808.9 1012.2 L809.8 1012.0 L810.7 1011.9 L811.6 1011.7 L812.5 1011.5 L813.5 1011.2 L814.4 1011.0 L815.3 1010.8 L816.2 1010.5 L817.2 1010.2 L818.1 1010.0 L819.0 1009.7 L819.9 1009.4 L820.9 1009.0 L821.8 1008.7 L822.7 1008.4 L823.6 1008.0 L824.5 1007.6 L825.5 1007.3 L826.4 1006.9 L827.3 1006.5 L828.2 1006.1 L829.2 1005.7 L830.1 1005.3 L831.0 1004.8 L831.9 1004.4 L832.8 1003.9 L833.8 1003.5 L834.7 1003.0 L835.6 1002.6 L836.5 1002.1 L837.5 1001.6 L838.4 1001.1 L839.3 1000.6 L840.2 1000.1 L841.1 999.6 L842.1 999.1 L843.0 998.6 L843.9 998.0 L844.8 997.5 L845.8 997.0 L846.7 996.4 L847.6 995.9 L848.5 995.3 L849.4 994.8 L850.4 994.2 L851.3 993.7 L852.2 993.1 L853.1 992.5 L854.1 992.0 L855.0 991.4 L855.9 990.8 L856.8 990.2 L857.8 989.6 L858.7 989.0 L859.6 988.5 L860.5 987.9 L861.4 987.3 L862.4 986.7 L863.3 986.1 L864.2 985.5 L865.1 984.9 L866.1 984.3 L867.0 983.7 L867.9 983.1 L868.8 982.5 L869.7 981.9 L870.7 981.3 L871.6 980.7 L872.5 980.1 L873.4 979.5 L874.4 978.9 L875.3 978.3 L876.2 977.7 L877.1 977.1 L878.0 976.5 L879.0 975.8 L879.9 975.2 L880.8 974.6 L881.7 974.0 L882.7 973.4 L883.6 972.9 L884.5 972.3 L885.4 971.7 L886.3 971.1 L887.3 970.5 L888.2 969.9 L889.1 969.3 L890.0 968.7 L891.0 968.1 L891.9 967.5 L892.8 967.0 L893.7 966.4 L894.6 965.8 L895.6 965.2 L896.5 964.7 L897.4 964.1 L898.3 963.5 L899.3 963.0 L900.2 962.4 L901.1 961.8 L902.0 961.3 L903.0 960.7 L903.9 960.2 L904.8 959.6 L905.7 959.1 L906.6 958.5 L907.6 958.0 L908.5 957.5 L909.4 956.9 L910.3 956.4 L911.3 955.9 L912.2 955.4 L913.1 954.8 L914.0 954.3 L914.9 953.8 L915.9 953.3 L916.8 952.8 L917.7 952.3 L918.6 951.8 L919.6 951.3 L920.5 950.8 L921.4 950.3 L922.3 949.8 L923.2 949.3 L924.2 948.9 L925.1 948.4 L926.0 947.9 L926.9 947.5 L927.9 947.0 L928.8 946.5 L929.7 946.1 L930.6 945.6 L931.5 945.2 L932.5 944.8 L933.4 944.3 L934.3 943.9 L935.2 943.5 L936.2 943.0 L937.1 942.6 L938.0 942.2 L938.9 941.8 L939.9 941.4 L940.8 941.0 L941.7 940.6 L942.6 940.2 L943.5 939.8 L944.5 939.4 L945.4 939.0 L946.3 938.6 L947.2 938.2 L948.2 937.9 L949.1 937.5 L950.0 937.1 L950.9 936.8 L951.8 936.4 L952.8 936.1 L953.7 935.7 L954.6 935.4 L955.5 935.0 L956.5 934.7 L957.4 934.4 L958.3 934.0 L959.2 933.7 L960.1 933.4 L961.1 933.1 L962.0 932.8 L962.9 932.4 L963.8 932.1 L964.8 931.8 L965.7 931.5 L966.6 931.3 L967.5 931.0 L968.5 930.7 L969.4 930.4 L970.3 930.1 L971.2 929.8 L972.1 929.6 L973.1 929.3 L974.0 929.0 L974.9 928.8 L975.8 928.5 L976.8 928.3 L977.7 928.0 L978.6 927.8 L979.5 927.6 L980.4 927.3 L981.4 927.1 L982.3 926.9 L983.2 926.6 L984.1 926.4 L985.1 926.2 L986.0 926.0 L986.9 925.8 L987.8 925.6 L988.7 925.4 L989.7 925.2 L990.6 925.0 L991.5 924.8 L992.4 924.6 L993.4 924.4 L994.3 924.2 L995.2 924.0 L996.1 923.8 L997.0 923.7 L998.0 923.5 L998.9 923.3 L999.8 923.2 L1000.7 923.0 L1001.7 922.9 L1002.6 922.7 L1003.5 922.5 L1004.4 922.4 L1005.4 922.3 L1006.3 922.1 L1007.2 922.0 L1008.1 921.8 L1009.0 921.7 L1010.0 921.6 L1010.9 921.4 L1011.8 921.3 L1012.7 921.2 L1013.7 921.1 L1014.6 921.0 L1015.5 920.8 L1016.4 920.7 L1017.3 920.6 L1018.3 920.5 L1019.2 920.4 L1020.1 920.3 L1021.0 920.2 L1022.0 920.1 L1022.9 920.0 L1023.8 919.9 L1024.7 919.8 L1025.6 919.8 L1026.6 919.7 L1027.5 919.6 L1028.4 919.5 L1029.3 919.4 L1030.3 919.4 L1031.2 919.3 L1032.1 919.2 L1033.0 919.1 L1033.9 919.1 L1034.9 919.0 L1035.8 919.0 L1036.7 918.9 L1037.6 918.8 L1038.6 918.8 L1039.5 918.7 L1040.4 918.7 L1041.3 918.6 L1042.2 918.6 L1043.2 918.5 L1044.1 918.5 L1045.0 918.4 L1045.9 918.4 L1046.9 918.4 L1047.8 918.3 L1048.7 918.3 L1049.6 918.3 L1050.6 918.2 L1051.5 918.2 L1052.4 918.2 L1053.3 918.1 L1054.2 918.1 L1055.2 918.1 L1056.1 918.1 L1057.0 918.1 L1057.9 918.0 L1058.9 918.0 L1059.8 918.0 L1060.7 918.0 L1061.6 918.0 L1062.5 918.0 L1063.5 918.0 L1064.4 917.9 L1065.3 917.9 L1066.2 917.9 L1067.2 917.9 L1068.1 917.9 L1069.0 917.9 L1069.9 917.9 L1070.8 917.9 L1071.8 917.9 L1072.7 917.9 L1073.6 917.9 L1074.5 917.9 L1075.5 917.9 L1076.4 917.9 L1077.3 917.9 L1078.2 918.0 L1079.2 918.0 L1080.1 918.0 L1081.0 918.0 L1081.9 918.0 L1082.8 918.0 L1083.8 918.0 L1084.7 918.0 L1085.6 918.1 L1086.5 918.1 L1087.5 918.1 L1088.4 918.1 L1089.3 918.1 L1090.2 918.1 L1091.1 918.2 L1092.1 918.2 L1093.0 918.2 L1093.9 918.2 L1094.8 918.2 L1095.8 918.3 L1096.7 918.3 L1097.6 918.3 L1098.5 918.3 L1099.4 918.4 L1100.4 918.4 L1101.3 918.4 L1102.2 918.5 L1103.1 918.5 L1104.1 918.5 L1105.0 918.5 L1105.9 918.6 L1106.8 918.6 L1107.7 918.6 L1108.7 918.7 L1109.6 918.7 L1110.5 918.7 L1111.4 918.8 L1112.4 918.8 L1113.3 918.8 L1114.2 918.8 L1115.1 918.9 L1116.0 918.9 L1117.0 918.9 L1117.9 919.0 L1118.8 919.0 L1119.7 919.1 L1120.7 919.1 L1121.6 919.1 L1122.5 919.2 L1123.4 919.2 L1124.4 919.2 L1125.3 919.3 L1126.2 919.3 L1127.1 919.3 L1128.0 919.4 L1129.0 919.4 L1129.9 919.4 L1130.8 919.5 L1131.7 919.5 L1132.7 919.6 L1133.6 919.6 L1134.5 919.6 L1135.4 919.7 L1136.3 919.7 L1137.3 919.7 L1138.2 919.8 L1139.1 919.8 L1140.0 919.9 L1141.0 919.9 L1141.9 919.9 L1142.8 920.0 L1143.7 920.0 L1144.6 920.0 L1145.6 920.1 L1146.5 920.1 L1147.4 920.2 L1148.3 920.2 L1149.3 920.2 L1150.2 920.3 L1151.1 920.3 L1152.0 920.3 L1153.0 920.4 L1153.9 920.4 L1154.8 920.4 L1155.7 920.5 L1156.6 920.5 L1157.6 920.6 L1158.5 920.6 L1159.4 920.6 L1160.3 920.7 L1161.3 920.7 L1162.2 920.7 L1163.1 920.8 L1164.0 920.8 L1164.9 920.8 L1165.9 920.9 L1166.0 920.9 L1166.2 920.9 L1166.3 921.0 L1166.6 921.0 L1166.9 921.1 L1167.3 921.1 L1168.0 921.1 L1168.8 921.0 L1169.9 920.9 L1171.2 920.8 L1172.7 920.6 L1174.3 920.5 L1176.0 920.2 L1177.7 920.0 L1179.4 919.7 L1181.1 919.3 L1182.7 918.9 L1184.3 918.4 L1185.8 917.9 L1187.4 917.3 L1189.1 916.7 L1190.9 916.1 L1192.8 915.3 L1194.8 914.5 L1197.0 913.6 L1199.4 912.6 L1202.0 911.6 L1204.6 910.5 L1207.3 909.3 L1210.0 908.1 L1212.7 906.9 L1215.3 905.6 L1217.9 904.3 L1220.4 902.9 L1223.0 901.5 L1225.6 900.0 L1228.2 898.5 L1230.8 897.0 L1233.3 895.5 L1235.9 894.0 L1238.5 892.5 L1241.0 891.0 L1243.6 889.5 L1246.2 888.0 L1248.7 886.5 L1251.3 885.1 L1253.8 883.7 L1256.4 882.3 L1259.0 881.0 L1261.7 879.7 L1264.4 878.4 L1267.1 877.1 L1269.8 875.9 L1272.3 874.8 L1274.8 873.7 L1277.0 872.7 L1279.0 871.8 L1280.8 871.1 L1282.3 870.5 L1283.9 869.9 L1285.4 869.3 L1287.0 868.7 L1288.7 868.1 L1290.7 867.3 L1292.9 866.4 L1295.3 865.5 L1297.8 864.5 L1300.4 863.5 L1303.1 862.5 L1305.8 861.5 L1308.5 860.6 L1311.2 859.7 L1314.0 858.9 L1317.1 858.0 L1320.3 857.2 L1323.5 856.4 L1326.5 855.6 L1329.2 855.0 L1331.5 854.4 L1333.2 854.0 L1343.3 824.1 L1352.9 839.0 L1372.4 852.6 L1382.7 846.4 L1391.9 842.7 L1401.2 846.4 L1411.1 862.5 L1420.0 851.0 L1430.0 831.2 L1439.2 838.8 L1449.5 849.2 L1459.9 855.0 L1469.1 848.0 L1478.3 845.0 L1488.2 857.0 L1497.9 850.0 L1504.8 856.1 L1513.0 860.2" fill="none" stroke="#2446d8" stroke-width="2.2" stroke-linejoin="round"/></g>
<line x1="1171.4" y1="1012.9" x2="1171.4" y2="952.5" stroke="#2a8a2a" stroke-width="1.2"/>
<circle cx="802.4" cy="892.1" r="3.9" fill="none" stroke="#2a8a2a" stroke-width="1.2"/>
<circle cx="1171.4" cy="1012.9" r="3.9" fill="#fff" stroke="#2a8a2a" stroke-width="1.2"/>
<circle cx="1171.4" cy="952.5" r="3.9" fill="#fff" stroke="#2a8a2a" stroke-width="1.2"/>
<line x1="1355.9" y1="1012.9" x2="1355.9" y2="1000.8199999999999" stroke="#111" stroke-width="1.2"/>
<circle cx="1355.9" cy="1012.9" r="3.9" fill="#fff" stroke="#111" stroke-width="1.2"/>
<circle cx="1355.9" cy="1000.82" r="3.9" fill="#fff" stroke="#111" stroke-width="1.2"/>
<path d="M802.4 803.7v4.5M802.4 1029.1v-4.5M820.85 803.7v2.6M820.85 1029.1v-2.6M839.3 803.7v2.6M839.3 1029.1v-2.6M857.75 803.7v2.6M857.75 1029.1v-2.6M876.2 803.7v2.6M876.2 1029.1v-2.6M894.65 803.7v2.6M894.65 1029.1v-2.6M913.1 803.7v2.6M913.1 1029.1v-2.6M931.55 803.7v2.6M931.55 1029.1v-2.6M950 803.7v2.6M950 1029.1v-2.6M968.45 803.7v2.6M968.45 1029.1v-2.6M986.9 803.7v4.5M986.9 1029.1v-4.5M1005.35 803.7v2.6M1005.35 1029.1v-2.6M1023.8 803.7v2.6M1023.8 1029.1v-2.6M1042.25 803.7v2.6M1042.25 1029.1v-2.6M1060.7 803.7v2.6M1060.7 1029.1v-2.6M1079.15 803.7v2.6M1079.15 1029.1v-2.6M1097.6 803.7v2.6M1097.6 1029.1v-2.6M1116.05 803.7v2.6M1116.05 1029.1v-2.6M1134.5 803.7v2.6M1134.5 1029.1v-2.6M1152.95 803.7v2.6M1152.95 1029.1v-2.6M1171.4 803.7v4.5M1171.4 1029.1v-4.5M1189.85 803.7v2.6M1189.85 1029.1v-2.6M1208.3 803.7v2.6M1208.3 1029.1v-2.6M1226.75 803.7v2.6M1226.75 1029.1v-2.6M1245.2 803.7v2.6M1245.2 1029.1v-2.6M1263.65 803.7v2.6M1263.65 1029.1v-2.6M1282.1 803.7v2.6M1282.1 1029.1v-2.6M1300.55 803.7v2.6M1300.55 1029.1v-2.6M1319 803.7v2.6M1319 1029.1v-2.6M1337.45 803.7v2.6M1337.45 1029.1v-2.6M1355.9 803.7v4.5M1355.9 1029.1v-4.5M1374.35 803.7v2.6M1374.35 1029.1v-2.6M1392.8 803.7v2.6M1392.8 1029.1v-2.6M1411.25 803.7v2.6M1411.25 1029.1v-2.6M1429.7 803.7v2.6M1429.7 1029.1v-2.6M1448.15 803.7v2.6M1448.15 1029.1v-2.6M1466.6 803.7v2.6M1466.6 1029.1v-2.6M1485.05 803.7v2.6M1485.05 1029.1v-2.6M1503.5 803.7v2.6M1503.5 1029.1v-2.6M788 1024.98h2.6M1513 1024.98h-2.6M788 1012.9h4.5M1513 1012.9h-4.5M788 1000.82h2.6M1513 1000.82h-2.6M788 988.74h2.6M1513 988.74h-2.6M788 976.66h2.6M1513 976.66h-2.6M788 964.58h2.6M1513 964.58h-2.6M788 952.5h2.6M1513 952.5h-2.6M788 940.42h2.6M1513 940.42h-2.6M788 928.34h2.6M1513 928.34h-2.6M788 916.26h2.6M1513 916.26h-2.6M788 904.18h2.6M1513 904.18h-2.6M788 892.1h4.5M1513 892.1h-4.5M788 880.02h2.6M1513 880.02h-2.6M788 867.94h2.6M1513 867.94h-2.6M788 855.86h2.6M1513 855.86h-2.6M788 843.78h2.6M1513 843.78h-2.6M788 831.7h2.6M1513 831.7h-2.6M788 819.62h2.6M1513 819.62h-2.6M788 807.54h2.6M1513 807.54h-2.6" stroke="#1a1a1a" stroke-width="1.3" fill="none"/>
<rect x="788" y="803.7" width="725" height="225.4" fill="none" stroke="#1e1e1e" stroke-width="1.35"/>
<text x="802.4" y="1048.5" font-size="16" text-anchor="middle" fill="#1c1c1c" >0</text>
<text x="894.65" y="1048.5" font-size="16" text-anchor="middle" fill="#1c1c1c" >0.5</text>
<text x="986.9" y="1048.5" font-size="16" text-anchor="middle" fill="#1c1c1c" >1</text>
<text x="1079.15" y="1048.5" font-size="16" text-anchor="middle" fill="#1c1c1c" >1.5</text>
<text x="1171.4" y="1048.5" font-size="16" text-anchor="middle" fill="#1c1c1c" >2</text>
<text x="1263.65" y="1048.5" font-size="16" text-anchor="middle" fill="#1c1c1c" >2.5</text>
<text x="1355.9" y="1048.5" font-size="16" text-anchor="middle" fill="#1c1c1c" >3</text>
<text x="1448.15" y="1048.5" font-size="16" text-anchor="middle" fill="#1c1c1c" >3.5</text>
<text x="1512.5" y="1048.5" font-size="16" text-anchor="end" fill="#1c1c1c" >t [s]</text>
<text x="782.3" y="1018.7" font-size="16" text-anchor="end" fill="#1c1c1c" >0</text>
<text x="782.3" y="958.3" font-size="16" text-anchor="end" fill="#1c1c1c" >0.5</text>
<text x="782.3" y="897.9" font-size="16" text-anchor="end" fill="#1c1c1c" >1</text>
<text x="782.5" y="819.6" font-size="16" text-anchor="end" fill="#1c1c1c" >y(t)</text>
<rect x="1494.6" y="782" width="17" height="17" rx="3" fill="#fff" opacity="0.6"/>
<rect x="1501.2" y="782.1" width="3.8" height="3.6" fill="#0a0a0a" transform="rotate(0 1503.1 790.5)"/>
<rect x="1501.2" y="782.1" width="3.8" height="3.6" fill="#0a0a0a" transform="rotate(60 1503.1 790.5)"/>
<rect x="1501.2" y="782.1" width="3.8" height="3.6" fill="#0a0a0a" transform="rotate(120 1503.1 790.5)"/>
<rect x="1501.2" y="782.1" width="3.8" height="3.6" fill="#0a0a0a" transform="rotate(180 1503.1 790.5)"/>
<rect x="1501.2" y="782.1" width="3.8" height="3.6" fill="#0a0a0a" transform="rotate(240 1503.1 790.5)"/>
<rect x="1501.2" y="782.1" width="3.8" height="3.6" fill="#0a0a0a" transform="rotate(300 1503.1 790.5)"/>
<circle cx="1503.1" cy="790.5" r="5.5" fill="none" stroke="#0a0a0a" stroke-width="2.3"/>
<path d="M1500.8 791.1 Q1503.1 790.1 1505.4 791.1 L1503.6 794.1 H1502.6 Z" fill="#0a0a0a"/>
<path d="M1501.1 788.7 L1501.9 790.8 M1505.1 788.7 L1504.3 790.8" stroke="#888" stroke-width="0.8"/>
<rect x="1450.3" y="811.3" width="54.8" height="48" fill="#fff" stroke="#1a1a1a" stroke-width="1.3"/>
<text x="1468.7" y="829.8" font-size="16" text-anchor="start" fill="#1c1c1c" >KG</text>
<path d="M1454 823.3h5.5M1462 823.3h2.5" stroke="#d62a2a" stroke-width="1.1"/>
<text x="1468.7" y="853.4" font-size="16" text-anchor="start" fill="#1c1c1c" >CG</text>
<path d="M1454 846.9h5.5M1462 846.9h2.5" stroke="#2446d8" stroke-width="1.1"/>
</svg></body></html>
